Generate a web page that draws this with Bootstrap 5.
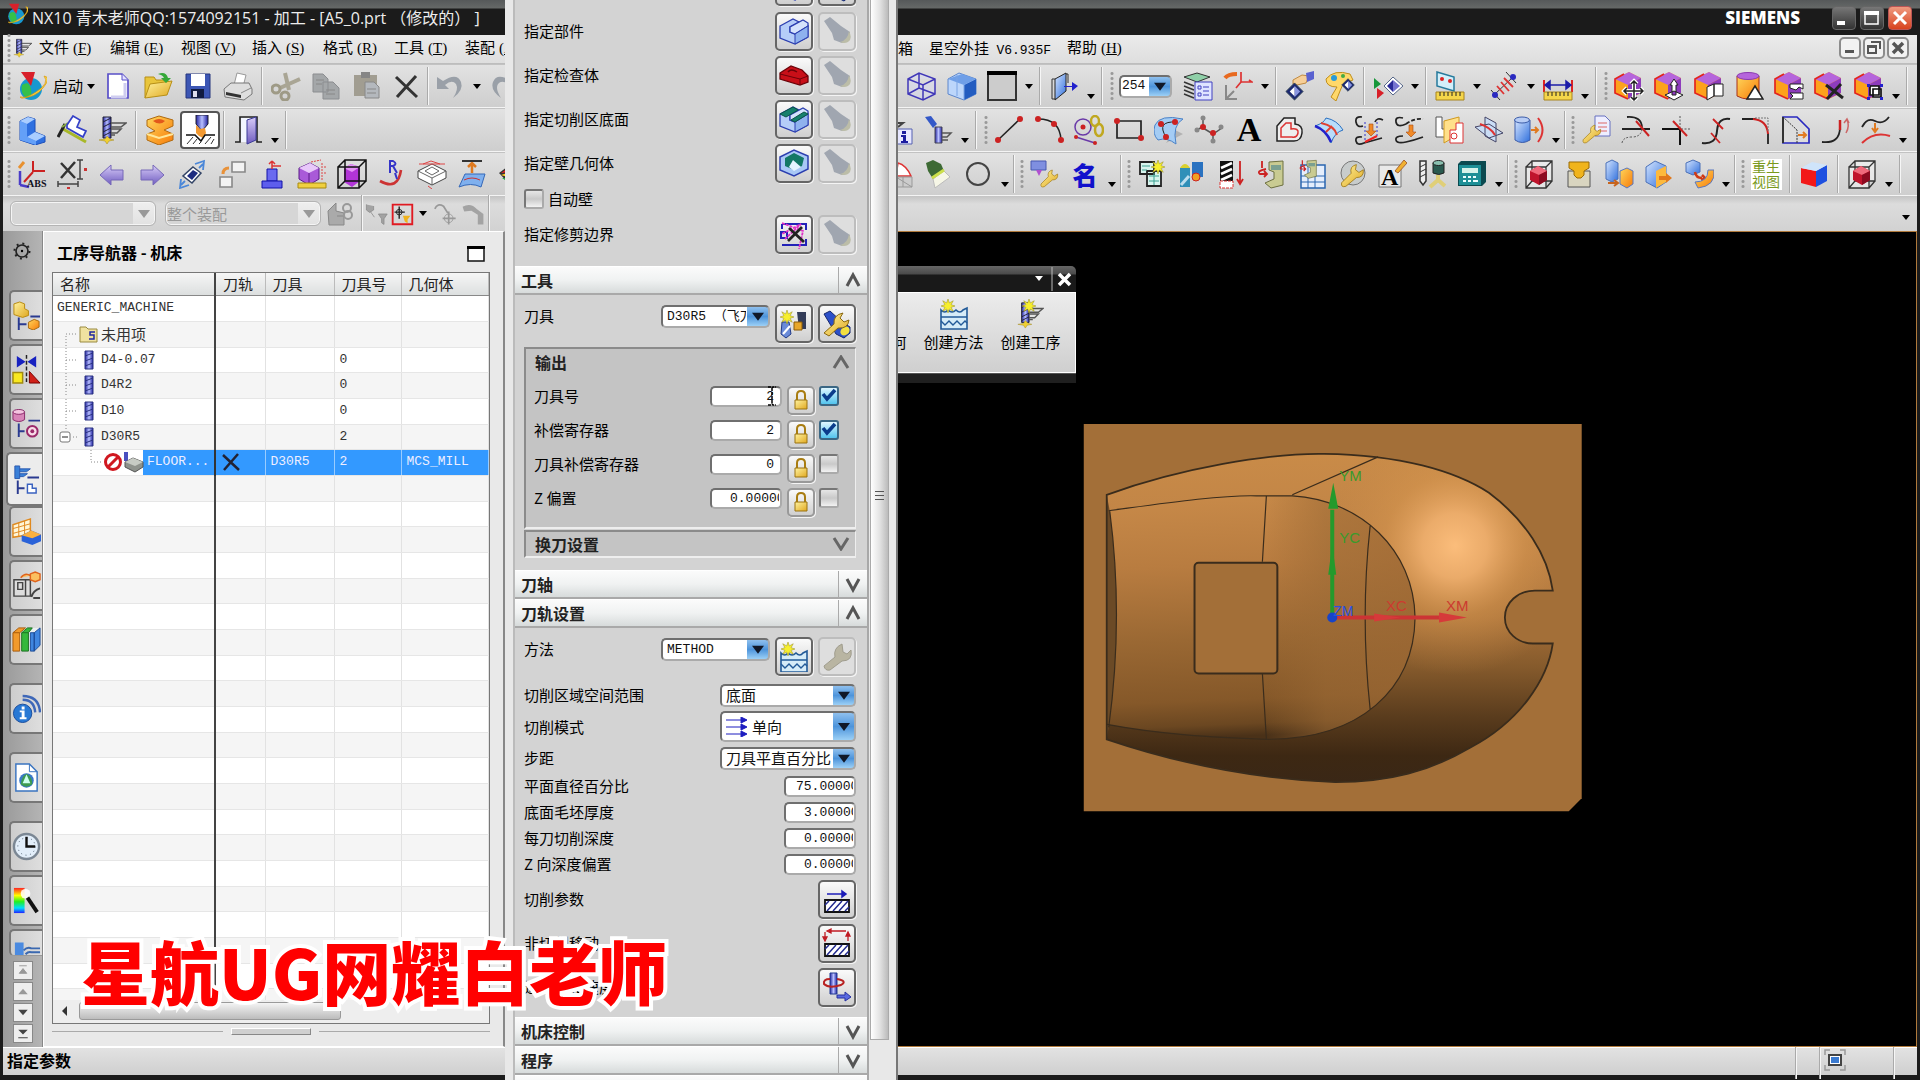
<!DOCTYPE html>
<html lang="zh-CN">
<head>
<meta charset="utf-8">
<meta name="viewport" content="width=device-width, initial-scale=1">
<title>NX10 - 加工</title>
<link href="https://cdn.jsdelivr.net/npm/bootstrap@5.3.0/dist/css/bootstrap.min.css" rel="stylesheet">
<style>
:root{--cjk:"Noto Sans CJK SC",sans-serif;--mono:"Liberation Mono","Noto Sans CJK SC",monospace}
body{background:#1b1b1b;font:15px/20px var(--cjk);color:#000;height:100vh;overflow:hidden;position:relative}
button{border:0;background:none;padding:0;color:inherit;font:inherit}
.app-frame{padding:0 3px 5px;height:100%}
/* title bar */
.title-strip{height:35px;background:linear-gradient(#56595a 0,#656867 8px,#1b1b1b 9px);margin:0 -3px;padding:0 8px 0 6px;color:#ededed;font:16px/20px "Open Sans",var(--cjk)}
.brand-word{font:800 17px/20px "Open Sans",sans-serif;color:#fff;margin-right:32px}
.win-btn{width:24px;height:24px;margin-left:4px;border-radius:4px;border:1px solid #666;background:linear-gradient(#777,#333);display:flex}
.win-btn.closer{background:linear-gradient(#ef9a80,#d8431f);border-color:#b55}
/* menu */
.menu-strip{height:29px;background:linear-gradient(#ebebeb,#dedede);border-bottom:1px solid #bdbdbd;padding-bottom:3px}
.menu-strip a{color:#000;text-decoration:none;width:71px;flex:none;white-space:nowrap}
.menu-strip .ltn{font:15px/20px "Liberation Serif",serif;margin-left:4px}
.mdi{width:22px;height:22px;margin-left:2px;border:2px solid #8c8c8c;border-radius:5px;background:#f2f2f2;display:flex}
/* tool rows */
.tool-strip{height:44px;background:linear-gradient(#e2e2e2,#cecece);border-bottom:1px solid #f4f4f4;border-top:1px solid #c2c2c2}
.left-part{width:502px;flex:none;overflow:hidden}
.right-part{margin-left:393px;flex:1;min-width:0;overflow:hidden}
.ic{width:40px;height:38px;flex:none;display:flex;align-items:center;justify-content:center}
.ic svg{width:30px;height:30px;display:block}
.ic.on{border:2px solid #555;border-radius:4px;background:#fff}
.crt{width:14px;height:38px;flex:none;display:flex;align-items:center;justify-content:center}
.crt::after{content:"";border:4px solid transparent;border-top:5px solid #000;border-bottom:0}
.crt.low{padding-top:20px}
.sp{width:8px;height:38px;flex:none;background:linear-gradient(90deg,#aaa 1px,#f6f6f6 1px 2px,transparent 2px) 3px 0 no-repeat}
.sp.thin{width:4px;background-position:1px 0}
.grip{width:9px;height:30px;flex:none;background:radial-gradient(circle,#999 1px,transparent 2px) 3px 0/6px 5px repeat-y}
.pick-strip{height:35px;background:linear-gradient(#c4c4c4,#dcdcdc 8px,#d2d2d2)}
/* inputs */
.nx-select,.nx-input{border:2px solid #6f6f6f;border-right-color:#aaa;border-bottom-color:#aaa;border-radius:5px;background-color:#fff;color:#111;font:13px/18px var(--mono);padding:0 22px 0 4px;height:23px;outline:0;min-width:0}
.nx-select{appearance:none;-webkit-appearance:none;background-image:url("data:image/svg+xml,%3Csvg xmlns='http://www.w3.org/2000/svg' viewBox='0 0 20 20'%3E%3Cpath d='M4 6h12l-6 8z' fill='%23101828'/%3E%3C/svg%3E"),linear-gradient(#8fc0ee,#4d94db 50%,#9cd0f6);background-size:20px 20px,21px 100%;background-position:right center;background-repeat:no-repeat}
.nx-select.han{font:15px/18px var(--cjk);width:136px}
.nx-select.tall{height:31px;padding-left:30px}
.nx-select.off{background-color:#d6d6d6;color:#999;border:1px solid #f5f5f5;outline:1px solid #b4b4b4;font:15px/18px var(--cjk);background-image:url("data:image/svg+xml,%3Csvg xmlns='http://www.w3.org/2000/svg' viewBox='0 0 20 20'%3E%3Cpath d='M4 6h12l-6 8z' fill='%23999'/%3E%3C/svg%3E"),linear-gradient(#eee,#e2e2e2);opacity:1}
.nx-input{height:21px;width:72px;padding:0 1px 0 18px}
.nx-input.wide-num{padding-left:10px}
.nx-input.num-right{text-align:right;padding:0 6px}
.tick{appearance:none;-webkit-appearance:none;width:20px;height:20px;margin:0;border:2px solid #777;border-right-color:#aaa;border-bottom-color:#aaa;border-radius:3px;background:linear-gradient(#e6e6e6,#c9c9c9 50%,#f2f2f2);flex:none}
.tick:checked{border-color:#3b6784;background:url("data:image/svg+xml,%3Csvg xmlns='http://www.w3.org/2000/svg' viewBox='0 0 16 16'%3E%3Cpath d='M2 6l4 5 8-9' fill='none' stroke='%230b3d8c' stroke-width='3.6'/%3E%3C/svg%3E"),linear-gradient(#dff6ff,#52c4ee)}
/* resource bar and navigator */
.res-bar{width:40px;flex:none;background:linear-gradient(90deg,#9a9a9a,#b4b4b4);border-right:1px solid #888;padding-left:6px}
.res-gear{height:59px;padding:8px 0 0 4px}
.res-tab{height:51px;width:33px;margin-bottom:3px;border:2px solid #777;border-right:0;border-radius:5px 0 0 5px;background:linear-gradient(90deg,#cdcdcd,#dedede);display:flex;align-items:center;justify-content:center;flex:none}
.res-tab svg{width:29px;height:29px}
.res-tab.live{background:#ececec;width:36px;margin-left:-3px;height:54px;margin-bottom:0}
.res-tab.gap-top{margin-top:15px}
.res-tab.cut-off{height:27px;align-items:flex-start;overflow:hidden;border-bottom:1px solid #999;margin-bottom:5px}
.pgr{width:20px;height:19px;margin:0 0 2px 4px;border:1px solid #888;background:#eee;display:flex}
.nav-pane{width:462px;flex:none;background:#e9e9e9;border:1px solid #fff;border-right:2px solid #888;padding:0 13px 0 8px}
.nav-title{height:40px;font:bold 16px/20px var(--cjk);padding:0 5px}
.grid-box{border:1px solid #777;background:#fff;height:752px;overflow:hidden;position:relative}
.op-grid{width:100%;table-layout:fixed;border-collapse:collapse;font:13px/18px var(--mono);color:#333}
.op-grid th{height:22px;font:15px/20px var(--cjk);color:#222;padding:0 7px;background:linear-gradient(#f6f6f6,#dcdfdf);border-right:1px solid #bbb;border-bottom:1px solid #888}
.op-grid td{height:26px;padding:0 5px;border-right:1px solid #e2e2e2;border-bottom:1px solid #e6e6e6;white-space:nowrap;overflow:hidden}
.op-grid tbody tr:nth-child(3n) td{height:25px}
.op-grid tbody tr:nth-child(even) td{background:#f5f5f5}
.op-grid td:first-child,.op-grid th:first-child{border-right:2px solid #444}
.op-grid td:first-child{padding:0 0 0 4px}
.op-grid .hot td{background:#3399ff;color:#eef;border-right-color:#9cf}
.op-grid .hot td:first-child{background:linear-gradient(90deg,#fff 90px,#3399ff 90px);border-right-color:#333}
.tree-row{display:flex;align-items:center;height:24px}
.tree-row svg{flex:none}
.han-txt{font:15px/20px var(--cjk)}
.hscroll{position:absolute;left:0;right:0;bottom:0;height:23px;background:#eee;padding:2px 0 3px 26px}
.hthumb{width:262px;height:18px;border:1px solid #999;border-radius:3px;background:linear-gradient(#f4f4f4,#bcbcbc)}
.split-line{height:1px;background:#aaa}
.split-thumb{width:80px;height:7px;background:#d0d0d0;border:1px solid #fff;border-right-color:#888;border-bottom-color:#888}
/* canvas */
.scene{background:#000;border:1px solid #b07a3c;position:relative;min-width:0;overflow:hidden}
.scene>svg{position:absolute;inset:0;width:100%;height:100%}
.floater{position:absolute;left:178px;top:34px;width:392px}
.floater .ft{height:26px;background:linear-gradient(#666,#4a4a4a 8px,#191919 9px);border-radius:0 5px 0 0}
.floater .fb{height:81px;background:linear-gradient(#ececec,#cfcfcf);border:1px solid #fff;padding-right:6px}
.floater .ff{height:10px;background:#1f1f1f;border-top:1px solid #555}
.fbtn{width:77px;text-align:center;padding-top:5px;align-self:flex-start}
.fbtn svg{width:30px;height:32px;display:block;margin:0 auto 2px}
.status-strip{height:28px;background:linear-gradient(#e2e2e2,#cfcfcf);font:bold 16px/20px var(--cjk);border-top:1px solid #fff;padding:0 0 3px 4px}
/* operation dialog */
.op-dialog{position:absolute;left:505px;top:0;width:393px;height:100%;background:#e8e8e8;border-right:2px solid #777;overflow:hidden;display:flex;padding-left:8px;z-index:3}
.op-body{width:356px;flex:none;background:#d3d3d3;border-left:2px solid #bbb;border-right:2px solid #a8a8a8}
.op-rows{padding:0 11px 0 9px}
.peek{height:9px;overflow:hidden;display:flex;align-items:flex-end;justify-content:flex-end;padding-bottom:3px}
.prow{height:44px;display:flex;align-items:center}
.prow>label,.prow>span:first-child{margin-right:auto;white-space:nowrap}
.prow.head-row{height:43px;align-items:flex-start}
.prow.head-row label{padding-top:2px}
.prow.head-row .nx-select{margin-top:1px}
.sq{width:38px;height:39px;border:2px solid #666;border-radius:5px;background:linear-gradient(#fafafa,#cfcfcf);margin-left:5px;display:flex;align-items:center;justify-content:center;flex:none;box-shadow:1px 1px 0 #f4f4f4}
.sq svg{width:30px;height:30px}
.sq:disabled{border-color:#bdbdbd;background:#dedede}
.sq.mini{width:28px;height:29px;margin-right:4px;border-color:#999;margin-top:8px}
.sq.mini svg{width:22px;height:22px}
.sect{height:29px;width:100%;display:flex;align-items:center;background:linear-gradient(#fbfbfb 0,#f0f2f2 50%,#d7dbdb);border-top:1px solid #fff;border-bottom:2px solid #a9a9a9;font:bold 16px/20px var(--cjk);padding-left:6px;color:#222}
.sect .chev{margin-left:auto;width:29px;height:26px;border-left:1px solid #aaa;padding:4px 6px}
.subgrp{border:2px solid #8b8b8b;border-right:1px solid #eee;border-bottom-color:#eee;background:#c4c4c4;margin:0}
.subhead{height:26px;width:100%;display:flex;align-items:center;justify-content:space-between;font:bold 16px/20px var(--cjk);padding:0 5px 0 9px;color:#222}
.row34{height:34px}
.row30{height:30px}.row33{height:33px}.row26{height:26px}.row27{height:27px}
.vrail{width:19px;height:1040px;margin-left:1px;border:1px solid #aaa;border-top:0;background:linear-gradient(90deg,#fff,#e4e4e4 50%,#bbb);position:relative}
.vrail i{position:absolute;left:4px;top:491px;width:9px;height:11px;background:repeating-linear-gradient(#555 0 1px,transparent 1px 4px)}
.beam{position:absolute;right:5px;top:0;width:10px;height:20px}
.banner-txt{position:absolute;left:81px;top:920px;z-index:5;font:900 69px/100px "Noto Sans CJK SC",sans-serif;color:#f00;white-space:nowrap;-webkit-text-stroke:8px #fff;paint-order:stroke fill;text-shadow:0 0 3px #fff}
</style>
<script src="https://cdn.jsdelivr.net/npm/bootstrap@5.3.0/dist/js/bootstrap.bundle.min.js"></script>
</head>
<body>
<svg width="0" height="0" class="position-absolute" aria-hidden="true">
<defs>
<linearGradient id="gb" x1="0" x2="1" y2="1"><stop stop-color="#d5e5ff"/><stop offset="1" stop-color="#2f6fdc"/></linearGradient>
<linearGradient id="gy" x1="0" x2="1" y2="1"><stop stop-color="#fff3a0"/><stop offset="1" stop-color="#e0a820"/></linearGradient>
<linearGradient id="gp" x1="0" x2="0" y2="1"><stop stop-color="#d8ccf8"/><stop offset="1" stop-color="#6f5cc0"/></linearGradient>
<linearGradient id="go" x1="0" x2="1" y2="1"><stop stop-color="#ffd75c"/><stop offset="1" stop-color="#f77a08"/></linearGradient>
<linearGradient id="gm" x1="0" x2="1"><stop stop-color="#2424a0"/><stop offset=".5" stop-color="#b8c0ff"/><stop offset="1" stop-color="#2020a0"/></linearGradient>
<linearGradient id="rb" x1="0" x2="0" y2="1"><stop stop-color="#f22"/><stop offset=".3" stop-color="#ff0"/><stop offset=".55" stop-color="#2e2"/><stop offset=".8" stop-color="#0df"/><stop offset="1" stop-color="#22f"/></linearGradient>
<symbol id="nx" viewBox="0 0 30 30"><circle cx="14" cy="18" r="11" fill="#1798d0"/><path d="M5 14q7-5 9 4t-5 9q-6-6-4-13" fill="#35c04a"/><path d="M27 5q6 7-8 16T3 26q14 2 23-9t1-12" fill="#f8d040" stroke="#d89a10" stroke-width=".7"/><path d="M4 1l14-0-4 14z" fill="#d8202a"/></symbol>
<symbol id="star" viewBox="0 0 16 16"><path d="M8 0l1.500 4.500L14 2l-2.500 4.500L16 8l-4.500 1.500L14 14l-4.500-2.500L8 16l-1.500-4.500L2 14l2.500-4.500L0 8l4.500-1.500L2 2l4.500 2.500z" fill="#f7ef2e" stroke="#9a9020" stroke-width=".6"/></symbol>
<symbol id="mill" viewBox="0 0 30 30"><path d="M6 2h8v21H6z" fill="url(#gm)" stroke="#223"/><path d="M6 7l8-4M6 12l8-4M6 17l8-4M6 21l8-4" stroke="#223"/><path d="M14 8h15l-5 4H14M14 14h10l-4 4h-6M14 20h4" fill="none" stroke="#555" stroke-width="1.500"/><path d="M2 25l6-1 2-3 3 3 4 1-5 1-2 3-2-3z" fill="#f0cf30" stroke="#a08820" stroke-width=".5"/></symbol>
<symbol id="new" viewBox="0 0 30 30"><path d="M5 3h14l6 6v18H5z" fill="#fff" stroke="#5a50c8" stroke-width="1.700"/><path d="M8 26h14V12" stroke="#cfcdf0" stroke-width="3" fill="none"/><path d="M19 3v6h6" fill="#e4e2ff" stroke="#5a50c8"/></symbol>
<symbol id="open" viewBox="0 0 30 30"><path d="M2 27V6h9l2 3h10v5" fill="#e9c53b" stroke="#b78f16"/><path d="M2 27l5-14 22-3-5 14z" fill="url(#gy)" stroke="#b78f16"/><path d="M15 3q8-3 10 4h3l-5 5-5-5h3q-1-3-6-4" fill="#35a838"/></symbol>
<symbol id="save" viewBox="0 0 30 30"><path d="M3 3h24v24H3z" fill="#3c56b4" stroke="#24357c"/><path d="M8 3h14v12H8z" fill="#fff"/><path d="M8 18h13v9H8z" fill="#111b40"/><path d="M10 20h4v6h-4z" fill="#dde"/></symbol>
<symbol id="print" viewBox="0 0 30 30"><path d="M11 14l3-12 9 2-3 12z" fill="#fff" stroke="#999"/><path d="M1 18l7-6h18l3 6v5l-8 6-19-3z" fill="#dedede" stroke="#777"/><path d="M3 21l15 3v3L3 24z" fill="#333"/><path d="M18 22l10-5" stroke="#888"/></symbol>
<symbol id="cut" viewBox="0 0 30 30"><path d="M14 2l4 17M29 8L9 17" stroke="#a9a594" stroke-width="4"/><circle cx="5" cy="18" r="4" fill="none" stroke="#9e9a86" stroke-width="3"/><circle cx="14" cy="25" r="4" fill="none" stroke="#9e9a86" stroke-width="3"/></symbol>
<symbol id="copy" viewBox="0 0 30 30"><path d="M2 3h10l5 5v13H2zM12 11h10l6 6v11H12z" fill="#a4a7a9" stroke="#8b8d90"/><path d="M5 9h8M5 13h6M15 19h9M15 23h9" stroke="#888"/></symbol>
<symbol id="paste" viewBox="0 0 30 30"><path d="M3 4h23v21H3z" fill="#a19d91"/><path d="M10 1h9v6h-9z" fill="#858585"/><path d="M14 11h9l5 5v11H14z" fill="#b4b8bd" stroke="#888"/><path d="M16 18h9M16 22h9" stroke="#888"/></symbol>
<symbol id="xx" viewBox="0 0 30 30"><path d="M5 6l21 20M25 5L6 26" stroke="#333" stroke-width="3"/></symbol>
<symbol id="undo" viewBox="0 0 30 30"><path d="M2 6v12h12l-4-4q7-6 11-1 3 5-3 14 11-8 8-16-4-10-18-1z" fill="#9aa0a8"/></symbol>
<symbol id="lpart" viewBox="0 0 30 30"><path d="M3 6l8-4 7 2v13l10 4v6l-10 3L3 25z" fill="#2f70e0" stroke="#1d4fb8"/><path d="M3 6l7 3v13l9 4v4L3 25z" fill="#64a0f8"/><path d="M3 6l8-4 7 2-8 5zM10 22l8-5 10 4-9 5z" fill="#a9cdff"/></symbol>
<symbol id="sket" viewBox="0 0 30 30"><path d="M6 14l23 13" stroke="#a8b828" stroke-width="3" fill="none"/><path d="M1 22l7-13" stroke="#222" stroke-width="3"/><path d="M5 12l6-4" stroke="#8a4" stroke-width="2"/><path d="M10 10l6-9 7 4-3 7 9 4-3 6-16-9z" fill="#fff" stroke="#3440c8" stroke-width="1.700"/></symbol>
<symbol id="mold" viewBox="0 0 30 30"><path d="M2 5l12-4 14 4v6l-9 4 9 4v6l-14 5-12-5v-6l8-3-8-5z" fill="url(#go)" stroke="#b06a10"/><path d="M8 6q6-4 12 0-5 5-12 0" fill="#e2581b"/><path d="M2 19l12 4 14-4" stroke="#ffe79a" stroke-width="2" fill="none"/></symbol>
<symbol id="cutter" viewBox="0 0 30 30"><path d="M11 0h12v9l-6 7-6-7z" fill="url(#gm)" stroke="#223"/><path d="M11 10l4 4 5-1 1 5-3 5-4-2-3-3z" fill="#f39a32"/><path d="M1 20h9l6 6 4-6h10" stroke="#111" stroke-width="1.500" fill="none"/><path d="M2 29l6-7M8 29l4-5M14 29l2-2M20 29l6-7M26 29l3-5" stroke="#333"/></symbol>
<symbol id="door" viewBox="0 0 30 30"><path d="M2 27h5V2h17v25h5" fill="none" stroke="#222" stroke-width="1.600"/><path d="M8 3h10v24H8z" fill="#f2f6ff"/><path d="M14 5l9-3v23l-9 4z" fill="url(#gp)" stroke="#3a3a98"/></symbol>
<symbol id="abs" viewBox="0 0 30 30"><path d="M16 13V2M16 12h12M16 13l-9 10" stroke="#c22" stroke-width="2"/><path d="M3 12v14M3 26l9 2" stroke="#4a3cc8" stroke-width="2.500"/><path d="M2 9l5-6" stroke="#e89130" stroke-width="3"/><text x="10" y="28" font-family="Liberation Serif" font-weight="700" font-size="10" fill="#112">ABS</text></symbol>
<symbol id="xdim" viewBox="0 0 30 30"><path d="M4 4l14 15M18 3L4 19" stroke="#333" stroke-width="2.500"/><path d="M23 1v19M20 1h6M20 20h6M1 25h20M1 22v6M21 22v6" stroke="#444" stroke-width="1.500"/><path d="M27 9h3v3h-3zM10 28h3v2h-3z" fill="#c33"/></symbol>
<symbol id="larr" viewBox="0 0 30 30"><path d="M3 16L14 6v5h12v10H14v5z" fill="url(#gp)" stroke="#7769b8"/></symbol>
<symbol id="rarr" viewBox="0 0 30 30"><path d="M27 16L16 6v5H4v10h12v5z" fill="url(#gp)" stroke="#7769b8"/></symbol>
<symbol id="swap" viewBox="0 0 30 30"><path d="M16 8l8 6-9 10-9-7z" fill="#fff" stroke="#346" stroke-width="1.500"/><path d="M16 11l5 3-6 7-5-4z" fill="#1d2c80"/><path d="M18 5l9-3-1 9M12 26l-9 3 1-9M22 9l4-4M8 22l-4 4" stroke="#4b87d8" stroke-width="1.800" fill="none"/></symbol>
<symbol id="two" viewBox="0 0 30 30"><path d="M15 3h13v10H15zM3 18h12v10H3z" fill="#f3f3f3" stroke="#888" stroke-width="1.600"/><path d="M6 15q0-6 6-6" stroke="#e8923a" stroke-width="3" fill="none"/></symbol>
<symbol id="ped" viewBox="0 0 30 30"><path d="M10 10h10v12H10z" fill="#6a6af0" stroke="#1313a8"/><path d="M5 22h20v7H5z" fill="#5d5ded" stroke="#1313a8"/><path d="M15 10V2M15 2l-3 3M15 2l3 3M15 7h9" stroke="#d33" fill="none" stroke-width="1.500"/></symbol>
<symbol id="boxr" viewBox="0 0 30 30"><path d="M2 9l11-5 9 5v11l-10 6-10-6z" fill="#a95ad8" stroke="#5b1b88"/><path d="M2 9l11-5 9 5-10 5z" fill="#e8c8fa"/><path d="M12 14v12" stroke="#5b1b88"/><path d="M1 24h28v5H1z" fill="#f0d040" stroke="#a88a10"/><path d="M14 3l10-2M25 4v18M27 8h3M27 14h3" stroke="#d44" stroke-dasharray="2 1"/></symbol>
<symbol id="bbox" viewBox="0 0 30 30"><path d="M7 9l7-4 9 3v14l-8 6-8-5z" fill="#b234d8"/><path d="M7 9l7-4 9 3-8 5z" fill="#e493f6"/><path d="M1 8h21v21H1zM8 1h21v21H8zM1 8l7-7M22 8l7-7M22 29l7-7M1 29l7-7" fill="none" stroke="#111" stroke-width="1.500"/></symbol>
<symbol id="rad" viewBox="0 0 30 30"><path d="M3 22q18 10 21-11" stroke="#c33" stroke-width="2.600" fill="none"/><path d="M13 1v13M13 2h3q5 3 0 5h-3M16 7l4 7M18 14l2 6" stroke="#3535c8" stroke-width="2" fill="none"/></symbol>
<symbol id="wirebox" viewBox="0 0 30 30"><path d="M1 12l14-7 14 7v7l-14 7-14-7z" fill="#fff" stroke="#444"/><path d="M1 12l14 7 14-7M15 19v7M8 12l7-4 7 4-7 4z" fill="none" stroke="#666"/><path d="M2 5h26M6 5l8-3 9 3M11 27l4 3" stroke="#d44" fill="none"/></symbol>
<symbol id="surfx" viewBox="0 0 30 30"><path d="M2 28l6-13h20l-4 13q-10-5-22 0" fill="#7fb0ee" stroke="#3568b8"/><path d="M15 14V5M11 8l4-4 4 4" stroke="#e07a1f" stroke-width="2.500" fill="none"/><path d="M5 2h20" stroke="#333" stroke-width="2"/><path d="M7 21q8-4 16 0" stroke="#c33" fill="none"/></symbol>
<symbol id="rainb" viewBox="0 0 30 30"><path d="M2 14L14 5v22z" fill="#333"/><path d="M4 14l10-7v6z" fill="#e22"/><path d="M4 16l10-3v6z" fill="#fc2"/><path d="M5 19h9v6z" fill="#2a4"/></symbol>
<symbol id="gfunn" viewBox="0 0 30 30"><path d="M3 3v7l4 3 5-3V5M8 12l5 7M18 15h11l-4 6v7l-3-2v-5z" fill="#a3a3a3" stroke="#8c8c8c"/></symbol>
<symbol id="gpath" viewBox="0 0 30 30"><path d="M5 9q3-7 10-3l5 8" stroke="#999" stroke-width="2" fill="none"/><path d="M21 12v15M14 20h15" stroke="#999" stroke-width="2"/><circle cx="21" cy="20" r="5" fill="none" stroke="#999"/></symbol>
<symbol id="glink" viewBox="0 0 30 30"><path d="M3 12l8-8v8l8 2v12H4zM12 17h8" fill="#aaa" stroke="#888"/><circle cx="22" cy="9" r="4" fill="none" stroke="#999" stroke-width="2"/><circle cx="23" cy="16" r="4" fill="none" stroke="#999" stroke-width="2"/></symbol>
<symbol id="gham" viewBox="0 0 30 30"><path d="M2 6q10-6 18 3l8 6v13h-7V16l-8-5-9 1z" fill="#a3a3a3"/></symbol>
<symbol id="snapbox" viewBox="0 0 30 30"><path d="M5 5h21v21H5z" fill="none" stroke="#e01a22" stroke-width="2"/><path d="M12 7v13M7 13h11" stroke="#222" stroke-width="1.500"/><circle cx="12" cy="13" r="3" fill="none" stroke="#222"/><path d="M16 17h8l-3 4v4l-3-2z" fill="#f0b21c"/></symbol>
<symbol id="cubew" viewBox="0 0 30 30"><path d="M1 8l11-6 16 6v15l-12 6-15-6zM1 8l15 6 12-6M16 14v15M12 2v15L1 23M12 17l16 6" fill="#d9ddf8" fill-opacity=".4" stroke="#4037b8" stroke-width="1.500"/></symbol>
<symbol id="cubes" viewBox="0 0 30 30"><path d="M1 8l11-6 17 6v15l-12 6-16-6z" fill="#bcd6fb" stroke="#5c86cc"/><path d="M17 14l12-6v15l-12 6z" fill="#235cc0"/><path d="M1 8l16 6 12-6-14-5z" fill="#6f9fe8"/><path d="M17 14v15M10 4v21" fill="none" stroke="#7ba4e4"/></symbol>
<symbol id="winb" viewBox="0 0 30 30"><path d="M1 1h28v28H1z" fill="#ccc" stroke="#333" stroke-width="2"/><path d="M0 0h30v4H0z" fill="#000"/></symbol>
<symbol id="door2" viewBox="0 0 30 30"><path d="M6 8l11-6v18l-11 9z" fill="url(#gb)" stroke="#222"/><path d="M6 8H3v20h4M17 3h2v9" stroke="#333" fill="none"/><path d="M15 15h8v-4l6 4-6 5v-4h-8z" fill="#22c"/></symbol>
<symbol id="layers" viewBox="0 0 30 30"><path d="M1 6l13-4 13 4-13 5z" fill="#8fd0a8" stroke="#333"/><path d="M1 11l10 4M1 15l10 4M1 19l10 4M1 23l10 4" stroke="#333" stroke-width="1.500"/><path d="M12 11h17v18H12z" fill="#dfe4ff" stroke="#4040c0"/><path d="M15 15h3v3h-3zM15 22h3v3h-3zM20 16h6M20 20h6M20 24h6" stroke="#4040c0" fill="none"/></symbol>
<symbol id="csys" viewBox="0 0 30 30"><path d="M18 11V1M18 11h11l-3-2M18 11l-5 6" stroke="#d33" stroke-width="1.700" fill="none"/><path d="M3 14v14h11M3 28l8-8" stroke="#888" stroke-width="2" fill="none"/><path d="M2 7q3-4 12-4" stroke="#e86a20" stroke-width="4" fill="none"/></symbol>
<symbol id="dia" viewBox="0 0 20 20"><path d="M10 1l9 9-9 9-9-9z" fill="#1b2870" stroke="#345"/><path d="M10 4l6 6-6 6z" fill="#8a96e0"/><path d="M10 5v10L5 10z" fill="#fff"/></symbol>
<symbol id="hand" viewBox="0 0 30 30"><path d="M8 9l9-5 7 1-3 7-9 2-4-1z" fill="#f6cf98" stroke="#c08a40"/><path d="M21 2l8-2v8l-7 3z" fill="#5a62d0"/><use href="#dia" x="0" y="11" width="19" height="19"/></symbol>
<symbol id="pal" viewBox="0 0 30 30"><path d="M1 8q8-10 24-5l3 6-10 4-3 7-4 10-5-4 6-10q-11 0-11-8" fill="#ffd86a" stroke="#c08e1c"/><circle cx="9" cy="7" r="3" fill="#2a9ad8"/><circle cx="18" cy="5" r="2" fill="#4a4"/><use href="#dia" x="16" y="7" width="14" height="14"/></symbol>
<symbol id="play" viewBox="0 0 30 30"><path d="M1 7l7 6-7 5z" fill="#18963a"/><path d="M4 17l7 5-7 6z" fill="#d81f28"/><path d="M20 6l10 9-10 9-9-9z" fill="#fff" stroke="#568"/><path d="M20 9l7 6-7 6z" fill="#7674d0"/><path d="M20 9v12l-6-6z" fill="#2a2a98"/></symbol>
<symbol id="rul" viewBox="0 0 30 30"><path d="M1 21h28v8H1z" fill="#f5d64a" stroke="#a8841c"/><path d="M5 21v4M9 21v4M13 21v4M17 21v4M21 21v4M25 21v4" stroke="#222"/></symbol>
<symbol id="meas" viewBox="0 0 30 30"><path d="M2 1l17 5v14L2 15z" fill="#d3effa" stroke="#267a9c" stroke-width="1.500"/><circle cx="7" cy="8" r="2" fill="#d22"/><circle cx="15" cy="10" r="2" fill="#d22"/><use href="#rul"/></symbol>
<symbol id="spring" viewBox="0 0 30 30"><path d="M5 24L24 6" stroke="#333"/><path d="M8 15l7 8M12 11l8 9M15 7l9 9" stroke="#d33" stroke-width="1.800"/><path d="M17 1l10 11M2 19l9 10" stroke="#333"/><circle cx="24" cy="6" r="3" fill="#2a2ac0"/><circle cx="6" cy="24" r="3" fill="#2a2ac0"/></symbol>
<symbol id="dist" viewBox="0 0 30 30"><path d="M1 9v12M29 9v12" stroke="#d22" stroke-width="2"/><path d="M2 14h26M2 14l5-4v8zM28 14l-5-4v8z" stroke="#1c1ca8" fill="#1c1ca8" stroke-width="1.500"/><use href="#rul"/></symbol>
<symbol id="pc" viewBox="0 0 30 30"><path d="M1 8l14-7 12 6v15l-12 6-14-6z" fill="#fda21c"/><path d="M1 8l14-7 12 6-13 7z" fill="#b565dc"/><path d="M14 14l13-7v15l-13 6z" fill="#8e3cbc"/><path d="M14 28L1 22V8l9-5" fill="none" stroke="#e2251f" stroke-width="1.700"/></symbol>
<symbol id="pc1" viewBox="0 0 30 30"><use href="#pc"/><path d="M20 10v19M10 20h19M17 13l3-3 3 3M17 26l3 3 3-3M13 17l-3 3 3 3M26 17l3 3-3 3" stroke="#fff" stroke-width="4" fill="none"/><path d="M20 10v19M10 20h19M17 13l3-3 3 3M17 26l3 3 3-3M13 17l-3 3 3 3M26 17l3 3-3 3" stroke="#222" stroke-width="1.500" fill="none"/></symbol>
<symbol id="pc2" viewBox="0 0 30 30"><use href="#pc"/><path d="M11 24l9-4 9 4-9 5zM20 8l-4 6h2v10h4V14h2z" fill="#fff" stroke="#222"/></symbol>
<symbol id="pc3" viewBox="0 0 30 30"><use href="#pc"/><path d="M13 16l7-3v12l-7 4zM20 13h9v12h-9z" fill="#fff" stroke="#222"/></symbol>
<symbol id="pc4" viewBox="0 0 30 30"><path d="M3 5v20q11 6 22 0V5" fill="url(#go)" stroke="#a83018"/><ellipse cx="14" cy="5" rx="11" ry="3.500" fill="#b565dc" stroke="#8a3ab0"/><path d="M13 28l8-13 8 13z" fill="#fff" stroke="#222" stroke-width="1.500"/></symbol>
<symbol id="pc5" viewBox="0 0 30 30"><use href="#pc"/><path d="M16 13h13v5l-4-2-3 3-6-2zM16 22h13v6H16l3-3z" fill="#fff" stroke="#222"/></symbol>
<symbol id="pc6" viewBox="0 0 30 30"><use href="#pc"/><path d="M12 14l17 13M27 13L13 28" stroke="#222" stroke-width="3"/></symbol>
<symbol id="pc7" viewBox="0 0 30 30"><use href="#pc"/><path d="M16 15h9v9h-9zM19 18h8v8h-8z" fill="#fff" stroke="#111" stroke-width="1.700"/><path d="M13 13h3v3h-3zM26 13h3v3h-3zM13 26h3v3h-3zM26 26h3v3h-3z" fill="#22c"/></symbol>
<symbol id="info" viewBox="0 0 30 30"><path d="M12 8h8l-5 4" stroke="#444" stroke-width="2" fill="none"/><path d="M13 14h16v15H13z" fill="#e6e6ff" stroke="#5560b0"/><path d="M19 16h4v3h-4zM18 20h5v6h2v2h-7v-2h2v-4h-2z" fill="#1a1aa0"/></symbol>
<symbol id="torch" viewBox="0 0 30 30"><path d="M2 2l6-1 6 8-4 4z" fill="#3358c8"/><path d="M12 12h7v16h-7z" fill="url(#gm)" stroke="#445"/><path d="M19 18h9l-4 4h-5M19 25h6" stroke="#555" fill="none" stroke-width="1.500"/></symbol>
<symbol id="line" viewBox="0 0 30 30"><path d="M4 25L26 4" stroke="#222" stroke-width="1.500"/><circle cx="4" cy="25" r="3" fill="#c22"/><circle cx="26" cy="4" r="3" fill="#c22"/></symbol>
<symbol id="arc" viewBox="0 0 30 30"><path d="M4 4q22 0 23 21" stroke="#222" stroke-width="1.500" fill="none"/><circle cx="4" cy="4" r="3" fill="#c22"/><circle cx="20" cy="9" r="3" fill="#c22"/><circle cx="27" cy="25" r="3" fill="#c22"/></symbol>
<symbol id="circ" viewBox="0 0 30 30"><circle cx="9" cy="12" r="8" fill="none" stroke="#6a39a8" stroke-width="1.500"/><circle cx="9" cy="12" r="2.500" fill="#c22"/><ellipse cx="21" cy="6" rx="4" ry="5" fill="none" stroke="#c0a820" stroke-width="2.500"/><ellipse cx="25" cy="15" rx="4" ry="6" fill="none" stroke="#c0a820" stroke-width="2.500"/><path d="M2 22l19 6" stroke="#6a39a8" stroke-width="1.500"/><circle cx="2" cy="22" r="2" fill="#c22"/><circle cx="21" cy="28" r="2" fill="#c22"/></symbol>
<symbol id="rect" viewBox="0 0 30 30"><path d="M3 6h24v17H3z" fill="none" stroke="#222" stroke-width="1.700"/><circle cx="3" cy="6" r="3" fill="#c22"/><circle cx="27" cy="23" r="3" fill="#c22"/></symbol>
<symbol id="studio" viewBox="0 0 30 30"><path d="M12 28l17-9-8-4z" fill="#999" opacity=".6"/><path d="M1 10q5-11 28-6-11 6-7 25-9-7-18-4-6-6-3-15" fill="#a4ccf4" stroke="#4a82c8"/><path d="M12 22q-10-16 10-15" stroke="#222" fill="none"/><circle cx="12" cy="22" r="3" fill="#c22"/><circle cx="7" cy="9" r="3" fill="#c22"/><circle cx="21" cy="7" r="3" fill="#c22"/></symbol>
<symbol id="spl" viewBox="0 0 30 30"><path d="M9 4v9l10 6 9-6M2 15l7-3M19 19v8" stroke="#555" stroke-width="1.500" fill="none"/><circle cx="9" cy="3" r="2.500" fill="#888"/><circle cx="3" cy="15" r="2.500" fill="#888"/><circle cx="27" cy="12" r="2.500" fill="#888"/><circle cx="19" cy="26" r="2.500" fill="#888"/><circle cx="9" cy="12" r="3" fill="#c22"/><circle cx="19" cy="18" r="3" fill="#c22"/></symbol>
<symbol id="offs" viewBox="0 0 30 30"><path d="M3 26V11l7-8h11v6q8 1 7 9-1 8-8 8z" fill="#eee" stroke="#222" stroke-width="1.500"/><path d="M7 22V13l5-5h5v6q8-1 7 4-1 5-6 4z" fill="none" stroke="#d33" stroke-width="1.500"/></symbol>
<symbol id="surfa" viewBox="0 0 30 30"><path d="M1 11Q10 8 12 3q11 2 17 12-8 2-12 13-5-13-16-17" fill="#b9ddfa" stroke="#2b70c0" stroke-width="1"/><path d="M1 11q11 4 16 16" stroke="#22c" stroke-width="2.500" fill="none"/><path d="M7 8q14 3 16 12M12 17l6-6" stroke="#e04030" stroke-width="1.800" fill="none"/></symbol>
<symbol id="curv" viewBox="0 0 30 30"><path d="M8 2Q1 1 2 7t7 4M29 5q-6-3-8 2M8 22q-7-1-6 4t8 2l18-5" stroke="#222" stroke-width="1.700" fill="none"/><path d="M11 7v19M23 7v14" stroke="#33c" stroke-dasharray="2 2"/><path d="M11 27l12-6" stroke="#e22" stroke-width="2"/><path d="M15 9h4v7h3l-5 5-5-5h3z" fill="#f08a28" stroke="#a84a10" stroke-width=".6"/></symbol>
<symbol id="curv2" viewBox="0 0 30 30"><path d="M9 3Q1 1 2 7t10 2" stroke="#222" stroke-width="1.700" fill="none"/><path d="M12 9q8-6 17-5" stroke="#222" stroke-width="1.800" stroke-dasharray="4 2" fill="none"/><path d="M9 21q-8 0-7 4t10 2 17-5" stroke="#222" stroke-width="1.700" fill="none"/><path d="M15 10h4v7h3l-5 5-5-5h3z" fill="#f08a28" stroke="#a84a10" stroke-width=".6"/></symbol>
<symbol id="proj" viewBox="0 0 30 30"><path d="M2 2h6v12h6v8H2z" fill="#fff" stroke="#555"/><path d="M10 6l15-4v17l-15 9z" fill="#ffe08a" stroke="#d09a20"/><path d="M16 15h6V8h7v20H16z" fill="#fff" stroke="#d33"/><circle cx="20" cy="21" r="3" fill="none" stroke="#d33"/></symbol>
<symbol id="inter" viewBox="0 0 30 30"><path d="M11 2l11 6v19l-11-6zM1 12l14-3 14 9-14 5z" fill="#c8defa" fill-opacity=".85" stroke="#446"/><path d="M6 9q10 3 15 11" stroke="#d33" stroke-width="2" fill="none"/></symbol>
<symbol id="cylarc" viewBox="0 0 30 30"><path d="M1 5v20q7 5 15 0V5" fill="url(#gb)" stroke="#3c5ca8"/><ellipse cx="8" cy="5" rx="7.500" ry="3" fill="#b8cdf5" stroke="#3c5ca8"/><path d="M17 15h7M21 12l3 3-3 3" stroke="#e07a20" stroke-width="2" fill="none"/><path d="M24 3q9 12 0 24" stroke="#d33" stroke-width="2" fill="none"/></symbol>
<symbol id="wrench" viewBox="0 0 30 30"><path d="M3 24l11-11q-2-8 6-10l-1 6 4 3 5-3q1 9-8 9L8 28q-6 2-5-4" fill="url(#gy)" stroke="#a07a18"/></symbol>
<symbol id="wdoc" viewBox="0 0 30 30"><path d="M14 1h10l5 5v15H14z" fill="#eef" stroke="#6670c0"/><path d="M17 8h9M17 12h9M17 16h9" stroke="#d66"/><use href="#wrench" x="0" y="8" width="21" height="21"/></symbol>
<symbol id="t1" viewBox="0 0 30 30"><path d="M6 2q15-1 15 11M1 14h28" stroke="#222" stroke-width="1.800" fill="none"/><path d="M21 14q-1 8-10 8t-10 6" stroke="#555" stroke-dasharray="2 1.500" fill="none"/><path d="M15 6l13 15" stroke="#c22" stroke-width="2"/></symbol>
<symbol id="t2" viewBox="0 0 30 30"><path d="M1 14h18v16" stroke="#111" stroke-width="2" fill="none"/><path d="M19 1v13h11" stroke="#555" stroke-dasharray="2 1.500" fill="none"/><path d="M12 6l14 15" stroke="#c22" stroke-width="2"/></symbol>
<symbol id="t3" viewBox="0 0 30 30"><path d="M1 28q14 2 15-12T29 4" stroke="#222" stroke-width="2" fill="none"/><path d="M12 4l10 10M10 18l9 10" stroke="#c22" stroke-width="1.800"/></symbol>
<symbol id="t4" viewBox="0 0 30 30"><path d="M1 4h14M27 18v11" stroke="#222" stroke-width="1.800"/><path d="M12 4q14 1 15 15" stroke="#c22" stroke-width="2" fill="none"/><path d="M14 3h13v13" stroke="#777" stroke-dasharray="2 1" fill="none"/></symbol>
<symbol id="t5" viewBox="0 0 30 30"><path d="M2 2h14l12 12v14H2z" fill="#ddd" stroke="#2828c0" stroke-width="1.700"/><path d="M2 28V2" stroke="#333" stroke-width="2"/><path d="M2 2l14 13v13" stroke="#333" stroke-dasharray="2 1" fill="none"/><path d="M17 20h8M22 17l3 3-3 3" stroke="#e07a20" stroke-width="2" fill="none"/></symbol>
<symbol id="t6" viewBox="0 0 30 30"><path d="M1 27q18 2 18-15" stroke="#222" stroke-width="1.800" fill="none"/><path d="M19 15V5" stroke="#c22" stroke-width="2.500"/><path d="M26 5q3 6-1 13M23 8l3-4 2 4" stroke="#c66" stroke-width="1.500" fill="none"/></symbol>
<symbol id="t7" viewBox="0 0 30 30"><path d="M1 12Q6 2 14 6t14-4" stroke="#222" stroke-width="1.800" fill="none"/><path d="M1 28q12-12 28-7" stroke="#d33" stroke-width="2" fill="none"/><path d="M14 8v8M11 13l3 4 3-4" stroke="#e07a20" stroke-width="2" fill="none"/></symbol>
<symbol id="fan" viewBox="0 0 30 30"><path d="M15 4q8 2 13 13H13z" fill="#fff" stroke="#d33" stroke-width="1.500"/><path d="M13 18h16v10H13zM13 18l16 10M20 18v10" fill="#ccc" stroke="#999"/></symbol>
<symbol id="lamp" viewBox="0 0 30 30"><path d="M3 4l7-3 8 4 3 7-11 8-5-8z" fill="#3d6a34"/><path d="M21 12l6 6-15 11-2-9z" fill="#f6f6e6" stroke="#bbb"/><path d="M9 19l12-8" stroke="#cde04a" stroke-width="3"/></symbol>
<symbol id="ring" viewBox="0 0 30 30"><circle cx="15" cy="15" r="11" fill="none" stroke="#444" stroke-width="2"/></symbol>
<symbol id="bw" viewBox="0 0 30 30"><path d="M1 2h15v9H1z" fill="#7f8fe0" stroke="#4858b0"/><path d="M6 11h6l-3 6z" fill="#b050d0"/><use href="#wrench" x="9" y="9" width="20" height="20"/></symbol>
<symbol id="gridn" viewBox="0 0 30 30"><path d="M3 3h14v12H3zM10 12h14v15H10z" fill="#d8f4ee" stroke="#222" stroke-width="1.800"/><path d="M12 17h10M12 22h10M17 14v12M5 7h8M5 11h5" stroke="#3aa090"/><use href="#star" x="14" y="1" width="14" height="14"/></symbol>
<symbol id="cyl2" viewBox="0 0 30 30"><path d="M3 9h10v19H3z" fill="#2f8fb8"/><path d="M3 9q5-8 10 0z" fill="#d8d030"/><path d="M4 26l8-9" stroke="#bde" stroke-width="3"/><path d="M15 3h11v15H15z" fill="#2a72c0"/><circle cx="19" cy="18" r="4" fill="#f2a020" stroke="#c22"/></symbol>
<symbol id="hat" viewBox="0 0 30 30"><path d="M3 2h13v20H3z" fill="#111"/><path d="M4 9l11-5M4 15l11-5M4 21l11-5" stroke="#fff" stroke-width="2.500"/><path d="M3 22h13v7H3z" fill="#fff" stroke="#d33" stroke-dasharray="3 1"/><path d="M23 2v22M20 20l3 5 3-5" stroke="#c22" stroke-width="1.800" fill="none"/></symbol>
<symbol id="mach" viewBox="0 0 30 30"><path d="M12 3l14-1v24l-12 3-6-5 9-4v-7l-5-2z" fill="#c9cb92" stroke="#6d7040"/><path d="M14 6h10v5H14z" fill="#7aa090"/><path d="M9 10q-10 2-6 5h7M7 12l3 3-3 3M5 2v7" stroke="#c22" stroke-width="1.800" fill="none"/></symbol>
<symbol id="mach2" viewBox="0 0 30 30"><path d="M4 6h24v23H4z" fill="#e5eefc" stroke="#2a66b0" stroke-width="1.500"/><path d="M4 17h24M4 23h24M11 6v23M18 6v23" stroke="#2a66b0"/><use href="#mach" x="1" y="0" width="22" height="20"/></symbol>
<symbol id="wball" viewBox="0 0 30 30"><circle cx="16" cy="14" r="12" fill="#c8cccc" stroke="#777"/><use href="#wrench" x="2" y="3" width="26" height="26"/></symbol>
<symbol id="aedit" viewBox="0 0 30 30"><path d="M2 6h22v22H2z" fill="#e9e9e9" stroke="#777"/><text x="4" y="26" font-family="Liberation Serif" font-weight="700" font-size="24">A</text><path d="M18 12L27 1l3 3-9 10z" fill="#f0b030" stroke="#a63"/></symbol>
<symbol id="tools2" viewBox="0 0 30 30"><path d="M3 2h6v20l-3 4-3-4z" fill="#eee" stroke="#333" stroke-width="1.500"/><path d="M3 8l6-3M3 13l6-3M3 18l6-3" stroke="#333"/><path d="M16 4v10q6 3 11 0V4" fill="#2a5a50" stroke="#222"/><ellipse cx="21.500" cy="4" rx="5.500" ry="2.500" fill="#8ac0b0" stroke="#222"/><path d="M21 16v5l-8 7M21 21l7 6" stroke="#e0cf78" stroke-width="4" fill="none"/></symbol>
<symbol id="calc" viewBox="0 0 30 30"><path d="M1 5l3-3h25v21l-4 4H1z" fill="#0b4a50"/><path d="M2 6h22v20H2z" fill="#1d8f96"/><path d="M5 9h16v5H5z" fill="#d5f2ea"/><path d="M6 18h3M11 18h3M16 18h3M6 22h3M11 22h3M16 22h5" stroke="#eff" stroke-width="2"/></symbol>
<symbol id="redc" viewBox="0 0 30 30"><path d="M2 8h20v21H2zM8 2h20v20H8zM2 8l6-6M22 8l6-6M22 29l6-7M2 29l6-7" fill="#fff" fill-opacity=".4" stroke="#333" stroke-width="1.300"/><path d="M6 12l8-5 9 5v9l-8 5-9-5z" fill="#c0142c"/><path d="M6 12l8-5 9 5-8 4z" fill="#f06a7c"/><path d="M15 16l8-4v9l-8 5z" fill="#8c0a20"/></symbol>
<symbol id="die" viewBox="0 0 30 30"><path d="M4 12h22v16H4z" fill="#d9d5c0" stroke="#555"/><path d="M5 3h20v6l-5 3v4l-3 3h-4l-3-3v-4L5 9z" fill="#f0b41c" stroke="#9a6c08"/></symbol>
<symbol id="blk2" viewBox="0 0 30 30"><path d="M2 4l6-3 6 3v16l-6 3-6-3z" fill="url(#gb)" stroke="#4a70b8"/><path d="M16 12l7-3 6 3v13l-6 4-7-4z" fill="url(#go)" stroke="#5a78c0"/><path d="M4 24h9M10 21l4 3-4 3" stroke="#c8641c" stroke-width="2" fill="none"/></symbol>
<symbol id="blk1" viewBox="0 0 30 30"><path d="M2 8l9-6 11 5v16l-9 6-11-6z" fill="url(#gb)" stroke="#4a70b8"/><path d="M12 12l10-5v16l-10 6z" fill="#fdb93c"/><path d="M15 17h7v-3l6 5-6 5v-3h-7z" fill="#e0781c"/></symbol>
<symbol id="blk3" viewBox="0 0 30 30"><path d="M2 4l7-3 7 3v9l-7 3-7-3z" fill="url(#gb)" stroke="#4a70b8"/><path d="M11 13q1 6 7 6M18 16l3 3-4 2" stroke="#d03a14" stroke-width="2.500" fill="none"/><path d="M24 11h6q2 16-16 18l-3-6q13 0 13-12" fill="url(#go)" stroke="#5a78c0"/></symbol>
<symbol id="rbcube" viewBox="0 0 30 30"><path d="M2 9l15 3v16L2 24z" fill="#f21818"/><path d="M17 12l11-6v16l-11 6z" fill="#1e50e0"/><path d="M2 9l11-6 15 3-11 6z" fill="#cfe4fa"/></symbol>
<symbol id="slot" viewBox="0 0 30 30"><path d="M1 10L14 3l6 3-9 5v5l5 2 13-8v11l-13 7-15-6z" fill="#b5cdf8" stroke="#2c3fb0" stroke-width="1.300"/><path d="M11 16V11l13-7 5 3v3l-13 8z" fill="#d5e3fc" stroke="#2c3fb0" stroke-width="1.300"/><path d="M16 18l13-8v11l-13 7z" fill="#8fb2ee" stroke="#2c3fb0"/></symbol>
<symbol id="slotg" viewBox="0 0 30 30"><use href="#slot"/><path d="M1 10L14 3l5 3-12 7zM12 16l13-8 4 2-13 8z" fill="#16806c" stroke="#0b5547"/></symbol>
<symbol id="rclamp" viewBox="0 0 30 30"><path d="M1 13l11-7 11 4 6 6v6l-8 3L1 19z" fill="#c80f18" stroke="#6b0208" stroke-width="1.300"/><path d="M1 14l20 5v6M21 19l8-3" stroke="#6b0208" fill="none"/><path d="M9 12q3-4 9 0" stroke="#6b0208" fill="none" stroke-width="1.500"/></symbol>
<symbol id="hexw" viewBox="0 0 30 30"><path d="M1 9L15 2l14 6v13l-14 7-14-6z" fill="#a9c8f6" stroke="#2c3fb0" stroke-width="1.500"/><path d="M6 10l9-5 10 5-2 8-8 4-9-4z" fill="#137866"/><path d="M10 19l4-7 8 7-7 4z" fill="#e6f5ff"/></symbol>
<symbol id="bound" viewBox="0 0 30 30"><path d="M3 5h24v6M3 5v5M2 13h6v6H2zM3 26h24v-6" stroke="#2222b8" stroke-width="2" fill="none"/><path d="M3 4l21 8-4 18M6 20L22 5l-19 10" stroke="#e030c8" stroke-width="1.800" fill="none" stroke-dasharray="3 1"/><path d="M10 9l15 14M23 8L9 22" stroke="#222" stroke-width="2.800"/></symbol>
<symbol id="flash" viewBox="0 0 30 30"><path d="M2 5l6-4 11 9 9 6-1 8-7 3-8-3-2-7z" fill="#a0a6b0"/><path d="M18 26q8-2 9-11 4 8-1 11-4 2-8 0" fill="#bcbda8"/></symbol>
<symbol id="newtool" viewBox="0 0 30 30"><path d="M3 13h7l2 12-5 4-5-4z" fill="#6a8ad8" stroke="#223a88"/><path d="M4 25l7-8" stroke="#fff" stroke-width="2"/><path d="M18 3h9v17h-7z" fill="#333c58"/><path d="M15 13h8v8h-8z" fill="#e8a72a" stroke="#8b5a08"/><use href="#star" x="1" y="1" width="14" height="14"/></symbol>
<symbol id="edtool" viewBox="0 0 30 30"><path d="M2 5l6-3 12 11 8 5v6l-6 5-8-4z" fill="#2c50c8" stroke="#16286c"/><ellipse cx="23" cy="22" rx="5" ry="4" fill="#f4e040" transform="rotate(-40 23 22)"/><path d="M2 24l10-9q-1-9 9-11l-3 5 4 4 5-2q-1 9-11 8l-9 8z" fill="url(#gy)" stroke="#8a6810"/></symbol>
<symbol id="waves" viewBox="0 0 30 30"><path d="M2 11q4 4 7 0 4 4 8 0 4 4 7 0l4-2v21H2z" fill="#d6ecf8" stroke="#225a98" stroke-width="1.600"/><path d="M2 18h26M2 22l4 4 4-4 4 4 4-4 4 4 4-4 2 2" stroke="#225a98" stroke-width="1.400" fill="none"/><use href="#star" x="2" y="0" width="14" height="14"/></symbol>
<symbol id="gwrench" viewBox="0 0 30 30"><path d="M2 24l11-9q-2-9 7-13l1 8 4 2 4-4q2 11-9 11L8 28q-5 1-6-4" fill="#b9b5a2" stroke="#a09d8e"/></symbol>
<symbol id="lock" viewBox="0 0 22 22"><path d="M7 12V6q0-4 4-4t4 4v6" fill="none" stroke="#a87c10" stroke-width="2"/><path d="M5 11h12v9H5z" fill="url(#gy)" stroke="#9a7210"/></symbol>
<symbol id="hatchb" viewBox="0 0 30 30"><path d="M3 16h24v12H3z" fill="#fff" stroke="#111" stroke-width="1.800"/><path d="M5 27l9-10M11 27l9-10M17 27l9-10M3 21l4-4M23 27l4-4" stroke="#222a90" stroke-width="1.500"/></symbol>
<symbol id="cp" viewBox="0 0 30 30"><use href="#hatchb"/><path d="M5 10h18M20 7l4 3-4 3z" stroke="#1c1cb8" stroke-width="1.500" fill="#1c1cb8"/></symbol>
<symbol id="ncm" viewBox="0 0 30 30"><use href="#hatchb"/><path d="M26 13V7M3 4v7M24 3H7M24 8l2-4 2 4zM1 9l2 4 2-4zM9 1L5 3l4 2z" stroke="#c01c24" stroke-width="1.300" fill="#c01c24"/></symbol>
<symbol id="feed" viewBox="0 0 30 30"><path d="M8 1h7v21H8z" fill="url(#gm)" stroke="#223a90"/><path d="M15 7q11 2 4 6-12 4-17-1-1-5 6-5" stroke="#b82222" stroke-width="2" fill="none"/><path d="M15 23h8v-3l6 5-6 4v-3h-8z" fill="#5a6ae0" stroke="#2630a0"/></symbol>
<symbol id="onew" viewBox="0 0 30 30"><use href="#mill" y="2" width="28" height="28"/><use href="#star" x="6" y="0" width="14" height="14"/></symbol>
<symbol id="r1" viewBox="0 0 30 30"><path d="M2 3l6-2 5 2v5l4 2v5l-6 2-9-3z" fill="url(#gy)" stroke="#b98a10"/><path d="M19 16h10M7 17v13M7 24h8" stroke="#2a3a90" stroke-width="2" fill="none"/><path d="M17 22l6-3 5 2v6l-6 3-5-2z" fill="url(#go)" stroke="#a86a10"/></symbol>
<symbol id="r2" viewBox="0 0 30 30"><path d="M5 1v12l9-6zM25 1v12l-9-6z" fill="#1822c0"/><path d="M15 0v30" stroke="#222" stroke-dasharray="4 2" stroke-width="1.500"/><path d="M1 18h10v11H1z" fill="#f8e820" stroke="#a08a10" stroke-width="1.500"/><path d="M18 17l11 12H18z" fill="#d02018" stroke="#700"/></symbol>
<symbol id="r3" viewBox="0 0 30 30"><path d="M1 3v8q6 4 12 0V3" fill="#d884b8" stroke="#8a2a6a"/><ellipse cx="7" cy="3" rx="6" ry="2.500" fill="#f4c4e0" stroke="#8a2a6a"/><path d="M17 12h12M7 15v14M7 23h6" stroke="#2a3a90" stroke-width="2"/><circle cx="21" cy="23" r="5.500" fill="#f8dce8" stroke="#9a2a6a" stroke-width="2"/><circle cx="21" cy="23" r="2" fill="#9a2a6a"/></symbol>
<symbol id="r4" viewBox="0 0 30 30"><path d="M4 1h5v13H4zM9 4h11l-4 3H9M9 9h8l-4 3H9" fill="#3a80d8" stroke="#2a5ab0"/><path d="M17 13h12M7 16v14M7 24h7" stroke="#2a3a90" stroke-width="2"/><path d="M17 20h5v4h4v5h-9z" fill="#fff" stroke="#3a62c0" stroke-width="1.500"/></symbol>
<symbol id="r5" viewBox="0 0 30 30"><path d="M1 8L19 2v16L1 21z" fill="#fff6d8" stroke="#e08a20" stroke-width="1.500"/><path d="M1 12l18-5M1 17l18-5M7 6v14M13 4v14" stroke="#e08a20"/><path d="M10 19l10-5 10 4v7l-9 4-11-4z" fill="#2a62d8"/><path d="M10 19l10-5 10 4-9 4z" fill="#f9b040"/></symbol>
<symbol id="r6" viewBox="0 0 30 30"><path d="M2 9h17v17H2zM6 12h5v7H6zM14 9v17" fill="#ddd" stroke="#444" stroke-width="1.500"/><path d="M9 7q5-6 10-2M19 3l5-2 5 2v6l-5 2-5-2z" fill="#fbc060" stroke="#e0641c" stroke-width="1.500"/><path d="M20 27q2-7 9-9M22 28h7" stroke="#444" stroke-width="2" fill="none"/></symbol>
<symbol id="r7" viewBox="0 0 30 30"><path d="M1 8l6-5h22v17l-8 7H1z" fill="#e9eef0"/><path d="M1 8h7v19H1zM1 8l6-5h7L8 8" fill="#f29a2c" stroke="#a85a08"/><path d="M10 8h7v19h-7zM10 8l6-5h5l-4 5" fill="#34b83c" stroke="#1a7020"/><path d="M19 8h4v19h-4zM23 8l6-5v18l-6 6z" fill="#3f86e0" stroke="#1b4c98"/></symbol>
<symbol id="r8" viewBox="0 0 30 30"><circle cx="11" cy="20" r="9.500" fill="#2878d4" stroke="#1a4c9c"/><path d="M10 13h3v3h-3zM8 17h5v7h2v2H8v-2h2v-5H8z" fill="#fff"/><path d="M11 6q12 0 13 13M11 2q17 0 18 17" stroke="#3f68b8" stroke-width="2.500" fill="none"/></symbol>
<symbol id="r9" viewBox="0 0 30 30"><path d="M4 1h14l8 8v20H4z" fill="#fff" stroke="#3a74c0" stroke-width="1.500"/><path d="M18 1v8h8" fill="none" stroke="#3a74c0"/><circle cx="15" cy="18" r="7.500" fill="#3a78c8"/><path d="M15 11q6 3 6 11-6 5-12 0 1-9 6-11" fill="#3c9a50"/><path d="M15 12l4 9h-8z" fill="#cfe"/></symbol>
<symbol id="r10" viewBox="0 0 30 30"><circle cx="15" cy="15" r="13" fill="#e2eefa" stroke="#7b8794" stroke-width="2.500"/><circle cx="15" cy="15" r="9" fill="none" stroke="#456" stroke-dasharray="1 3.700"/><path d="M15 5v10h9" stroke="#111" stroke-width="2.500" fill="none"/></symbol>
<symbol id="r11" viewBox="0 0 30 30"><path d="M2 2h11v26H2z" fill="url(#rb)"/><circle cx="14" cy="8" r="5" fill="#fff" opacity=".85"/><path d="M16 12l10 15" stroke="#111" stroke-width="4"/></symbol>
<symbol id="r12" viewBox="0 0 30 30"><path d="M3 12h9v14H3z" fill="#4a8ae0"/><path d="M12 20q4-4 8-2h9M14 24q3-3 6-2h9" fill="none" stroke="#3a68b0" stroke-width="2"/></symbol>
</defs></svg>

<div class="app-frame d-flex flex-column">
<header class="title-strip d-flex align-items-center flex-shrink-0">
 <svg width="22" height="24" class="flex-shrink-0 mb-2 me-1"><use href="#nx"/></svg>
 <span class="text-nowrap">NX10 青木老师QQ:1574092151 - 加工 - [A5_0.prt （修改的） ]</span>
 <span class="brand-word ms-auto">SIEMENS</span>
 <button class="win-btn ms-0" aria-label="最小化"><svg viewBox="0 0 22 22"><path d="M4 14h8v4H4z" fill="#fff"/></svg></button>
 <button class="win-btn" aria-label="最大化"><svg viewBox="0 0 22 22"><path d="M4 6h13v11H4z" fill="none" stroke="#fff" stroke-width="1.500"/><path d="M3 4h15v4H3z" fill="#fff"/></svg></button>
 <button class="win-btn closer" aria-label="关闭"><svg viewBox="0 0 22 22"><path d="M5 5l12 12M17 5L5 17" stroke="#fff" stroke-width="3"/></svg></button>
</header>

<nav class="menu-strip d-flex align-items-center flex-shrink-0">
 <div class="left-part d-flex align-items-center">
  <span class="grip"></span><svg width="21" height="20" class="flex-shrink-0" style="margin-right:6px"><use href="#mill"/></svg>
  <a href="#">文件<span class="ltn">(<u>F</u>)</span></a><a href="#">编辑<span class="ltn">(<u>E</u>)</span></a><a href="#">视图<span class="ltn">(<u>V</u>)</span></a><a href="#">插入<span class="ltn">(<u>S</u>)</span></a><a href="#">格式<span class="ltn">(<u>R</u>)</span></a><a href="#">工具<span class="ltn">(<u>T</u>)</span></a><a href="#">装配<span class="ltn">(<u>A</u>)</span></a>
 </div>
 <div class="right-part d-flex align-items-center">
  <a href="#" class="w-auto me-3">箱</a><a href="#" class="w-auto me-3">星空外挂 <span style="font:13px var(--mono)" class="ms-1">V6.935F</span></a><a href="#">帮助<span class="ltn">(<u>H</u>)</span></a>
  <span class="ms-auto"></span>
  <button class="mdi" aria-label="最小化窗口"><svg viewBox="0 0 18 18"><path d="M4 11h9v3H4z" fill="#555"/></svg></button>
  <button class="mdi" aria-label="还原窗口"><svg viewBox="0 0 18 18"><path d="M6 3h9v7M3 7h8v7H3zM3 8h8" fill="none" stroke="#555" stroke-width="2"/></svg></button>
  <button class="mdi me-2" aria-label="关闭窗口"><svg viewBox="0 0 18 18"><path d="M4 4l10 10M14 4L4 14" stroke="#555" stroke-width="3.500"/></svg></button>
 </div>
</nav>

<div class="tool-strip d-flex flex-shrink-0">
 <div class="left-part d-flex align-items-center">
  <span class="grip"></span><button class="ic" aria-label="NX"><svg><use href="#nx"/></svg></button><button class="text-nowrap flex-shrink-0" style="width:32px">启动</button><span class="crt"></span>
  <button class="ic" aria-label="新建"><svg><use href="#new"/></svg></button><button class="ic" aria-label="打开"><svg><use href="#open"/></svg></button><button class="ic" aria-label="保存"><svg><use href="#save"/></svg></button><button class="ic" aria-label="打印"><svg><use href="#print"/></svg></button><span class="sp"></span>
  <button class="ic" aria-label="剪切"><svg><use href="#cut"/></svg></button><button class="ic" aria-label="复制"><svg><use href="#copy"/></svg></button><button class="ic" aria-label="粘贴"><svg><use href="#paste"/></svg></button><button class="ic" aria-label="删除"><svg><use href="#xx"/></svg></button><span class="sp thin"></span>
  <button class="ic" aria-label="撤销"><svg><use href="#undo"/></svg></button><span class="crt"></span><button class="ic" aria-label="重做"><svg style="transform:scaleX(-1)"><use href="#undo"/></svg></button>
 </div>
 <div class="right-part d-flex align-items-center ps-1">
  <button class="ic" aria-label="线框"><svg><use href="#cubew"/></svg></button><button class="ic" aria-label="着色"><svg><use href="#cubes"/></svg></button><button class="ic" aria-label="背景"><svg><use href="#winb"/></svg></button><span class="crt"></span><span class="sp"></span>
  <button class="ic" aria-label="剖切"><svg><use href="#door2"/></svg></button><span class="crt low"></span><span class="sp"></span><span class="grip"></span>
  <select class="nx-select ms-1" style="width:53px;margin-right:6px;padding-left:1px" aria-label="图层"><option>254</option></select>
  <button class="ic" aria-label="图层设置"><svg><use href="#layers"/></svg></button><button class="ic" aria-label="坐标系"><svg><use href="#csys"/></svg></button><span class="crt"></span><span class="sp"></span>
  <button class="ic" aria-label="显示隐藏"><svg><use href="#hand"/></svg></button><button class="ic" aria-label="对象显示"><svg><use href="#pal"/></svg></button><span class="sp"></span>
  <button class="ic" aria-label="播放"><svg><use href="#play"/></svg></button><span class="crt"></span><span class="sp"></span>
  <button class="ic" aria-label="测量面"><svg><use href="#meas"/></svg></button><span class="crt"></span><button class="ic" aria-label="测量长度"><svg><use href="#spring"/></svg></button><span class="crt"></span><button class="ic" aria-label="测量距离"><svg><use href="#dist"/></svg></button><span class="crt low"></span><span class="sp"></span><span class="grip"></span>
  <button class="ic" aria-label="移动面"><svg><use href="#pc1"/></svg></button><button class="ic" aria-label="拉出面"><svg><use href="#pc2"/></svg></button><button class="ic" aria-label="偏置区域"><svg><use href="#pc3"/></svg></button><button class="ic" aria-label="调整大小"><svg><use href="#pc4"/></svg></button><button class="ic" aria-label="替换面"><svg><use href="#pc5"/></svg></button><button class="ic" aria-label="删除面"><svg><use href="#pc6"/></svg></button><button class="ic" aria-label="组面"><svg><use href="#pc7"/></svg></button><span class="crt low"></span><span class="sp"></span>
 </div>
</div>

<div class="tool-strip d-flex flex-shrink-0">
 <div class="left-part d-flex align-items-center">
  <span class="grip"></span><button class="ic" aria-label="建模"><svg><use href="#lpart"/></svg></button><button class="ic" aria-label="外观造型"><svg><use href="#sket"/></svg></button><button class="ic" aria-label="加工"><svg><use href="#mill"/></svg></button><span class="sp"></span>
  <button class="ic" aria-label="模具"><svg><use href="#mold"/></svg></button><button class="ic on" aria-label="铣削"><svg><use href="#cutter"/></svg></button><span class="sp"></span><button class="ic" aria-label="退出"><svg><use href="#door"/></svg></button><span class="crt low"></span><span class="sp"></span>
 </div>
 <div class="right-part d-flex align-items-center">
  <button class="ic" style="margin-left:-20px" aria-label="信息"><svg><use href="#info"/></svg></button><button class="ic" aria-label="分析"><svg><use href="#torch"/></svg></button><span class="crt low"></span><span class="sp"></span><span class="grip"></span>
  <button class="ic" aria-label="直线"><svg><use href="#line"/></svg></button><button class="ic" aria-label="圆弧"><svg><use href="#arc"/></svg></button><button class="ic" aria-label="圆"><svg><use href="#circ"/></svg></button><button class="ic" aria-label="矩形"><svg><use href="#rect"/></svg></button><button class="ic" aria-label="艺术样条"><svg><use href="#studio"/></svg></button><button class="ic" aria-label="样条"><svg><use href="#spl"/></svg></button><button class="ic" aria-label="文本" style="font:bold 34px/30px 'Liberation Serif',serif">A</button><button class="ic" aria-label="偏置曲线"><svg><use href="#offs"/></svg></button><button class="ic" aria-label="面上偏置"><svg><use href="#surfa"/></svg></button><button class="ic" aria-label="桥接"><svg><use href="#curv"/></svg></button><button class="ic" aria-label="投影"><svg><use href="#curv2"/></svg></button><button class="ic" aria-label="组合投影"><svg><use href="#proj"/></svg></button><button class="ic" aria-label="相交"><svg><use href="#inter"/></svg></button><button class="ic" aria-label="缠绕"><svg><use href="#cylarc"/></svg></button><span class="crt low"></span><span class="sp thin"></span><span class="grip"></span>
  <button class="ic" aria-label="编辑参数"><svg><use href="#wdoc"/></svg></button><button class="ic" aria-label="修剪曲线"><svg><use href="#t1"/></svg></button><button class="ic" aria-label="修剪拐角"><svg><use href="#t2"/></svg></button><button class="ic" aria-label="分割"><svg><use href="#t3"/></svg></button><button class="ic" aria-label="圆角"><svg><use href="#t4"/></svg></button><button class="ic" aria-label="拉长"><svg><use href="#t5"/></svg></button><button class="ic" aria-label="长度"><svg><use href="#t6"/></svg></button><button class="ic" aria-label="光顺"><svg><use href="#t7"/></svg></button><span class="crt low"></span>
 </div>
</div>

<div class="tool-strip d-flex flex-shrink-0">
 <div class="left-part d-flex align-items-center">
  <span class="grip"></span><button class="ic" aria-label="绝对坐标"><svg><use href="#abs"/></svg></button><button class="ic" aria-label="删除尺寸"><svg><use href="#xdim"/></svg></button><button class="ic" aria-label="后退"><svg><use href="#larr"/></svg></button><button class="ic" aria-label="前进"><svg><use href="#rarr"/></svg></button><button class="ic" aria-label="互换"><svg><use href="#swap"/></svg></button><button class="ic" aria-label="移动"><svg><use href="#two"/></svg></button><button class="ic" aria-label="基座"><svg><use href="#ped"/></svg></button><button class="ic" aria-label="尺寸"><svg><use href="#boxr"/></svg></button><button class="ic" aria-label="包容体"><svg><use href="#bbox"/></svg></button><button class="ic" aria-label="半径"><svg><use href="#rad"/></svg></button><button class="ic" aria-label="线框体"><svg><use href="#wirebox"/></svg></button><button class="ic" aria-label="曲面"><svg><use href="#surfx"/></svg></button><button class="ic" aria-label="颜色"><svg><use href="#rainb"/></svg></button>
 </div>
 <div class="right-part d-flex align-items-center">
  <button class="ic" style="margin-left:-20px" aria-label="拔模"><svg><use href="#fan"/></svg></button><button class="ic" aria-label="灯光"><svg><use href="#lamp"/></svg></button><button class="ic" aria-label="圆环"><svg><use href="#ring"/></svg></button><span class="crt low"></span><span class="sp thin"></span><span class="grip"></span>
  <button class="ic" aria-label="属性"><svg><use href="#bw"/></svg></button><button class="ic" style="font:900 25px/30px var(--cjk);color:#11c">名</button><span class="crt low"></span><span class="sp thin"></span><span class="grip"></span>
  <button class="ic" aria-label="创建程序"><svg><use href="#gridn"/></svg></button><button class="ic" aria-label="创建刀具"><svg><use href="#cyl2"/></svg></button><button class="ic" aria-label="生成刀轨"><svg><use href="#hat"/></svg></button><button class="ic" aria-label="机床"><svg><use href="#mach"/></svg></button><button class="ic" aria-label="后处理"><svg><use href="#mach2"/></svg></button><button class="ic" aria-label="工具"><svg><use href="#wball"/></svg></button><button class="ic" aria-label="文字"><svg><use href="#aedit"/></svg></button><button class="ic" aria-label="刀具库"><svg><use href="#tools2"/></svg></button><button class="ic" aria-label="计算器"><svg><use href="#calc"/></svg></button><span class="crt low"></span><span class="sp thin"></span><span class="grip"></span>
  <button class="ic" aria-label="工件"><svg><use href="#redc"/></svg></button><button class="ic" aria-label="模腔"><svg><use href="#die"/></svg></button><button class="ic" aria-label="移动块"><svg><use href="#blk2"/></svg></button><button class="ic" aria-label="拉伸块"><svg><use href="#blk1"/></svg></button><button class="ic" aria-label="旋转块"><svg><use href="#blk3"/></svg></button><span class="crt low"></span><span class="sp thin"></span><span class="grip"></span>
  <button class="ic"><span class="bg-white" style="width:31px;height:31px;font:14px/15px var(--cjk);color:#7a9a1c">重生<br>视图</span></button><span class="sp"></span><button class="ic" aria-label="颜色块"><svg><use href="#rbcube"/></svg></button><span class="sp"></span><button class="ic" aria-label="毛坯"><svg><use href="#redc"/></svg></button><span class="crt low"></span><span class="sp"></span>
 </div>
</div>

<div class="pick-strip d-flex align-items-center flex-shrink-0">
 <div class="left-part d-flex align-items-center ps-2">
  <select class="nx-select off flex-shrink-0" style="width:144px" disabled aria-label="类型过滤器"><option></option></select>
  <select class="nx-select off flex-shrink-0 px-0" style="width:154px;margin-left:11px" disabled aria-label="选择范围"><option>整个装配</option></select>
  <button class="ic" aria-label="链接"><svg width="24" height="24"><use href="#glink"/></svg></button><span class="sp thin"></span>
  <button class="flex-shrink-0" aria-label="过滤"><svg width="24" height="24"><use href="#gfunn"/></svg></button><button class="flex-shrink-0" aria-label="捕捉"><svg width="28" height="28"><use href="#snapbox"/></svg></button><span class="crt"></span><button class="flex-shrink-0" aria-label="路径"><svg width="27" height="26"><use href="#gpath"/></svg></button><button class="flex-shrink-0 ms-1" aria-label="锤"><svg width="24" height="26"><use href="#gham"/></svg></button><span class="sp"></span>
 </div>
 <span class="crt ms-auto me-1 pt-2"></span>
</div>

<main class="d-flex flex-grow-1" style="min-height:0">
 <aside class="res-bar d-flex flex-column">
  <div class="res-gear flex-shrink-0"><button aria-label="设置"><svg width="18" height="18" viewBox="0 0 18 18"><circle cx="9" cy="9" r="6" fill="none" stroke="#222" stroke-width="1.700"/><circle cx="9" cy="9" r="7.500" fill="none" stroke="#222" stroke-width="2" stroke-dasharray="2 3.900"/><circle cx="9" cy="9" r="1.200"/></svg></button></div>
  <button class="res-tab" aria-label="装配导航器"><svg><use href="#r1"/></svg></button><button class="res-tab" aria-label="约束导航器"><svg><use href="#r2"/></svg></button><button class="res-tab" aria-label="部件导航器"><svg><use href="#r3"/></svg></button><button class="res-tab live" aria-label="工序导航器"><svg><use href="#r4"/></svg></button><button class="res-tab" aria-label="特征导航器"><svg><use href="#r5"/></svg></button><button class="res-tab" aria-label="机床导航器"><svg><use href="#r6"/></svg></button><button class="res-tab" aria-label="重用库"><svg><use href="#r7"/></svg></button><button class="res-tab gap-top" aria-label="信息"><svg><use href="#r8"/></svg></button><button class="res-tab gap-top" aria-label="浏览器"><svg><use href="#r9"/></svg></button><button class="res-tab gap-top" aria-label="历史记录"><svg><use href="#r10"/></svg></button><button class="res-tab" aria-label="材料"><svg><use href="#r11"/></svg></button><button class="res-tab cut-off" aria-label="角色"><svg><use href="#r12"/></svg></button>
  <button class="pgr" aria-label="顶部"><svg viewBox="0 0 18 18"><path d="M5 4h8M9 7l4 5H5z" stroke="#999" fill="#999"/></svg></button><button class="pgr" aria-label="上"><svg viewBox="0 0 18 18"><path d="M9 6l5 6H4z" fill="#999"/></svg></button><button class="pgr" aria-label="下"><svg viewBox="0 0 18 18"><path d="M9 12L4 6h10z" fill="#444"/></svg></button><button class="pgr" aria-label="底部"><svg viewBox="0 0 18 18"><path d="M9 10L4 5h10zM4 13h10v1H4z" fill="#444"/></svg></button>
 </aside>

 <section class="nav-pane">
  <div class="nav-title d-flex align-items-center justify-content-between"><span>工序导航器 - 机床</span><button aria-label="最大化面板"><svg width="18" height="16" viewBox="0 0 18 16"><path d="M1 2h16v13H1z" fill="#fff" stroke="#111" stroke-width="1.500"/><path d="M0 0h18v3H0z"/></svg></button></div>
  <div class="grid-box">
   <table class="op-grid">
    <colgroup><col style="width:162px"><col style="width:50px"><col style="width:69px"><col style="width:67px"><col></colgroup>
    <thead><tr><th>名称</th><th>刀轨</th><th>刀具</th><th>刀具号</th><th>几何体</th></tr></thead>
    <tbody>
    <tr><td>GENERIC_MACHINE</td><td></td><td></td><td></td><td></td></tr>
    <tr><td><div class="tree-row"><svg width="44" height="24"><path d="M9 24V12h12" stroke="#888" stroke-dasharray="1 2" fill="none"/><path d="M23 5h6l2 2h9v13H23z" fill="#f0e2a0" stroke="#998a40"/><path d="M38 10h-5v3h4v4h-5" fill="none" stroke="#2028a0" stroke-width="1.500"/></svg><span class="han-txt">未用项</span></div></td><td></td><td></td><td></td><td></td></tr>
    <tr><td><div class="tree-row"><svg width="44" height="24"><path d="M9 0v24M9 12h12" stroke="#888" stroke-dasharray="1 2" fill="none"/><path d="M28 3h8v18h-8z" fill="url(#gm)" stroke="#2a3280"/><path d="M28 8l8-3M28 13l8-3M28 18l8-3" stroke="#2a3280"/></svg>D4-0.07</div></td><td></td><td></td><td>0</td><td></td></tr>
    <tr><td><div class="tree-row"><svg width="44" height="24"><path d="M9 0v24M9 12h12" stroke="#888" stroke-dasharray="1 2" fill="none"/><path d="M28 3h8v18h-8z" fill="url(#gm)" stroke="#2a3280"/><path d="M28 8l8-3M28 13l8-3M28 18l8-3" stroke="#2a3280"/></svg>D4R2</div></td><td></td><td></td><td>0</td><td></td></tr>
    <tr><td><div class="tree-row"><svg width="44" height="24"><path d="M9 0v24M9 12h12" stroke="#888" stroke-dasharray="1 2" fill="none"/><path d="M28 3h8v18h-8z" fill="url(#gm)" stroke="#2a3280"/><path d="M28 8l8-3M28 13l8-3M28 18l8-3" stroke="#2a3280"/></svg>D10</div></td><td></td><td></td><td>0</td><td></td></tr>
    <tr><td><div class="tree-row"><svg width="44" height="24"><path d="M9 0v6M16 12h5" stroke="#888" stroke-dasharray="1 2" fill="none"/><rect x="3" y="7" width="10" height="10" rx="2" fill="#fff" stroke="#777"/><path d="M5 12h6" stroke="#222"/><path d="M28 3h8v18h-8z" fill="url(#gm)" stroke="#2a3280"/><path d="M28 8l8-3M28 13l8-3M28 18l8-3" stroke="#2a3280"/></svg>D30R5</div></td><td></td><td></td><td>2</td><td></td></tr>
    <tr class="hot"><td><div class="tree-row"><svg width="90" height="24"><path d="M34 0v12h12" stroke="#888" stroke-dasharray="1 2" fill="none"/><circle cx="56" cy="12" r="7.500" fill="#fff" stroke="#d01820" stroke-width="3"/><path d="M51 17L61 7" stroke="#d01820" stroke-width="3"/><path d="M67 2h4v9h-4z" fill="#4a50c0"/><path d="M68 12l8-4 10 4v5l-8 5-10-5z" fill="#8e928c" stroke="#555"/><path d="M68 12l8-4 10 4-8 4z" fill="#c7cbc4"/></svg>FLOOR...</div></td><td><svg width="20" height="20"><path d="M2 3l16 15M17 2L3 18" stroke="#223" stroke-width="2.500"/></svg></td><td>D30R5</td><td>2</td><td>MCS_MILL</td></tr>
    <tr><td></td><td></td><td></td><td></td><td></td></tr><tr><td></td><td></td><td></td><td></td><td></td></tr><tr><td></td><td></td><td></td><td></td><td></td></tr><tr><td></td><td></td><td></td><td></td><td></td></tr><tr><td></td><td></td><td></td><td></td><td></td></tr><tr><td></td><td></td><td></td><td></td><td></td></tr><tr><td></td><td></td><td></td><td></td><td></td></tr>
    <tr><td></td><td></td><td></td><td></td><td></td></tr><tr><td></td><td></td><td></td><td></td><td></td></tr><tr><td></td><td></td><td></td><td></td><td></td></tr><tr><td></td><td></td><td></td><td></td><td></td></tr><tr><td></td><td></td><td></td><td></td><td></td></tr><tr><td></td><td></td><td></td><td></td><td></td></tr><tr><td></td><td></td><td></td><td></td><td></td></tr>
    <tr><td></td><td></td><td></td><td></td><td></td></tr><tr><td></td><td></td><td></td><td></td><td></td></tr><tr><td></td><td></td><td></td><td></td><td></td></tr><tr><td></td><td></td><td></td><td></td><td></td></tr><tr><td></td><td></td><td></td><td></td><td></td></tr><tr><td></td><td></td><td></td><td></td><td></td></tr><tr><td></td><td></td><td></td><td></td><td></td></tr>
    </tbody>
   </table>
   <div class="hscroll"><svg width="8" height="10" class="position-absolute" style="left:8px;top:6px"><path d="M6 0v10L1 5z" fill="#333"/></svg><div class="hthumb"></div></div>
  </div>
  <div class="d-flex align-items-center gap-2 mt-1"><div class="split-line flex-grow-1"></div><div class="split-thumb"></div><div class="split-line flex-grow-1"></div></div>
 </section>

 <section class="scene flex-grow-1">
  <svg viewBox="504 232 1413 815" aria-label="零件模型">
   <defs>
    <linearGradient id="body" gradientUnits="userSpaceOnUse" x1="0" y1="454" x2="0" y2="783"><stop stop-color="#c98b48"/><stop offset=".3" stop-color="#bd8145"/><stop offset=".5" stop-color="#a87139"/><stop offset=".65" stop-color="#855a2c"/><stop offset=".8" stop-color="#5a3c1d"/><stop offset=".92" stop-color="#3d2813"/><stop offset="1" stop-color="#3a2716"/></linearGradient>
    <linearGradient id="deck" gradientUnits="userSpaceOnUse" x1="1150" y1="495" x2="1160" y2="740"><stop stop-color="#c88a49"/><stop offset=".3" stop-color="#b87c40"/><stop offset=".6" stop-color="#9a6833"/><stop offset=".85" stop-color="#855829"/><stop offset=".95" stop-color="#6b4721"/><stop offset="1" stop-color="#4a3118"/></linearGradient>
    <linearGradient id="fade" x1="0" x2="1"><stop stop-color="#9a6833" stop-opacity="0"/><stop offset=".4" stop-color="#9c6a35" stop-opacity=".8"/><stop offset="1" stop-color="#9c6834"/></linearGradient>
    <radialGradient id="glow" gradientUnits="userSpaceOnUse" cx="1455" cy="546" r="130"><stop stop-color="#fbbd7b"/><stop offset=".25" stop-color="#f0b06e" stop-opacity=".9"/><stop offset=".55" stop-color="#d6964f" stop-opacity=".5"/><stop offset="1" stop-color="#c98b48" stop-opacity="0"/></radialGradient>
    <clipPath id="hull"><path d="M1106 495C1180 468 1270 453 1324 454C1400 455 1455 471 1489 493C1525 520 1548 555 1553 591H1535C1518 591 1505 603 1505 618S1518 644 1533 644H1553C1548 680 1520 722 1471 748C1430 772 1390 783 1335 783C1260 780 1180 765 1106 740Z"/></clipPath>
   </defs>
   <path d="M1083 424H1582V799L1569 812H1083Z" fill="#a36f38"/>
   <g clip-path="url(#hull)"><path d="M1100 450H1560V790H1100z" fill="url(#body)"/><circle cx="1455" cy="546" r="130" fill="url(#glow)"/></g>
   <path d="M1108 511C1160 504 1220 495 1256 496H1292C1360 500 1414 550 1415 618C1414 690 1360 740 1267 740C1210 738 1160 735 1106 725Z" fill="url(#deck)"/>
   <path d="M1266 496H1292C1360 500 1414 550 1415 618C1414 690 1360 740 1267 740Z" fill="url(#fade)" opacity=".7"/>
   <path d="M1106 495L1109 511Q1123 618 1108 728L1106 740z" fill="#6b4a26"/>
   <g fill="none" stroke="#3a2c1c" stroke-width="1.200">
    <path d="M1106 495C1180 468 1270 453 1324 454C1400 455 1455 471 1489 493C1525 520 1548 555 1553 591H1535C1518 591 1505 603 1505 618S1518 644 1533 644H1553C1548 680 1520 722 1471 748C1430 772 1390 783 1335 783C1260 780 1180 765 1106 740Z" stroke-width="1.800"/>
    <path d="M1108 511C1160 504 1220 495 1256 496H1292C1360 500 1414 550 1415 618C1414 690 1360 740 1267 740C1210 738 1160 735 1106 725M1292 495L1378 457M1109 511Q1123 618 1108 728M1266 496L1262 562M1262 674L1266 740M1370 526Q1360 618 1370 710"/>
    <rect x="1194" y="563" width="83" height="111" rx="4" fill="#a36f38" stroke-width="2"/>
   </g>
   <path d="M1332 616V510" stroke="#249a2c" stroke-width="4"/><path d="M1333 483l5 26h-10zM1332 545l4 30h-8z" fill="#249a2c"/>
   <path d="M1334 618H1450" stroke="#cc3434" stroke-width="4"/><path d="M1467 618l-28 5v-10zM1400 618l-26 4v-8z" fill="#d63a3a"/>
   <circle cx="1332" cy="618" r="5" fill="#1744c8"/>
   <g font-family="Liberation Sans" font-size="15"><text x="1339" y="481" fill="#3a9a2c">YM</text><text x="1339" y="543" fill="#3a9a2c">YC</text><text x="1386" y="611" fill="#cc3a30">XC</text><text x="1446" y="611" fill="#cc3a30">XM</text><text x="1333" y="616" font-size="14" fill="#2a50e0">ZM</text></g>
  </svg>
  <div class="floater">
   <div class="ft d-flex align-items-center justify-content-end"><svg width="42" height="26"><path d="M1 10h8l-4 5z" fill="#fff"/><path d="M18 1v24" stroke="#bbb"/><path d="M25 8l11 11M36 8L25 19" stroke="#fff" stroke-width="3.500"/></svg></div>
   <div class="fb d-flex justify-content-end"><button class="fbtn"><svg><use href="#newtool"/></svg>创建刀具</button><button class="fbtn"><svg><use href="#r1"/></svg>创建几何</button><button class="fbtn"><svg><use href="#waves"/></svg>创建方法</button><button class="fbtn"><svg><use href="#onew"/></svg>创建工序</button></div>
   <div class="ff"></div>
  </div>
 </section>
</main>
<footer class="status-strip d-flex align-items-center flex-shrink-0"><span>指定参数</span><span class="sp ms-auto"></span><span class="sp ms-3"></span><svg width="22" height="22" viewBox="0 0 22 22"><path d="M1 6V1h5M16 1h5v5M21 16v5h-5M6 21H1v-5" fill="none" stroke="#999" stroke-width="1.500"/><path d="M5 6h12v10H5z" fill="#fff" stroke="#444" stroke-width="2"/><path d="M7 8h8v6H7z" fill="#3a7ad0"/></svg><span class="sp" style="margin:0 19px 0 44px"></span></footer>
</div>

<aside class="op-dialog">
 <form class="op-body">
  <div class="op-rows">
   <div class="peek"><button type="button" class="sq" aria-label="新建几何体"><svg><use href="#slot"/></svg></button><button type="button" class="sq" aria-label="编辑几何体"><svg><use href="#edtool"/></svg></button></div>
   <div class="prow"><span>指定部件</span><button type="button" class="sq" aria-label="部件"><svg><use href="#slot"/></svg></button><button type="button" class="sq" disabled aria-label="显示部件"><svg><use href="#flash"/></svg></button></div>
   <div class="prow"><span>指定检查体</span><button type="button" class="sq" aria-label="检查体"><svg><use href="#rclamp"/></svg></button><button type="button" class="sq" disabled aria-label="显示检查体"><svg><use href="#flash"/></svg></button></div>
   <div class="prow"><span>指定切削区底面</span><button type="button" class="sq" aria-label="底面"><svg><use href="#slotg"/></svg></button><button type="button" class="sq" disabled aria-label="显示底面"><svg><use href="#flash"/></svg></button></div>
   <div class="prow"><span>指定壁几何体</span><button type="button" class="sq" aria-label="壁"><svg><use href="#hexw"/></svg></button><button type="button" class="sq" disabled aria-label="显示壁"><svg><use href="#flash"/></svg></button></div>
   <div class="prow row27"><input class="tick me-1" type="checkbox" id="autowall"><label for="autowall">自动壁</label></div>
   <div class="prow"><span>指定修剪边界</span><button type="button" class="sq" aria-label="修剪边界"><svg><use href="#bound"/></svg></button><button type="button" class="sq" disabled aria-label="显示边界"><svg><use href="#flash"/></svg></button></div>
  </div>
  <button type="button" class="sect" style="margin-top:10px">工具<svg class="chev" viewBox="0 0 16 18"><path d="M2 15l6-11 6 11" stroke="#555" stroke-width="3" fill="none"/></svg></button>
  <div class="op-rows pb-2" style="padding-top:9px">
   <div class="prow head-row"><label for="tool">刀具</label><select id="tool" class="nx-select" style="width:109px"><option>D30R5 （飞刀）</option></select><button type="button" class="sq" aria-label="新建刀具"><svg><use href="#newtool"/></svg></button><button type="button" class="sq" aria-label="编辑刀具"><svg><use href="#edtool"/></svg></button></div>
   <div class="subgrp" style="padding:0 0 12px">
    <button type="button" class="subhead mb-1">输出<svg width="18" height="14" viewBox="0 0 18 14"><path d="M2 13L9 2l7 11" stroke="#666" stroke-width="3" fill="none"/></svg></button>
    <div class="prow row34 px-2 pe-3"><label for="f1">刀具号</label><span class="position-relative d-flex"><input id="f1" class="nx-input num-right" value="2"><svg class="beam" viewBox="0 0 10 20"><path d="M1 1h3l1 1 1-1h3M5 2v16M1 19h3l1-1 1 1h3" stroke="#000" stroke-width="1.500" fill="none" stroke-dasharray="3 1"/></svg></span><button type="button" class="sq mini" aria-label="锁定"><svg><use href="#lock"/></svg></button><input type="checkbox" class="tick" checked aria-label="刀具号继承"></div>
    <div class="prow row34 px-2 pe-3"><label for="f2">补偿寄存器</label><input id="f2" class="nx-input num-right" value="2"><button type="button" class="sq mini" aria-label="锁定"><svg><use href="#lock"/></svg></button><input type="checkbox" class="tick" checked aria-label="补偿继承"></div>
    <div class="prow row34 px-2 pe-3"><label for="f3">刀具补偿寄存器</label><input id="f3" class="nx-input num-right" value="0"><button type="button" class="sq mini" aria-label="锁定"><svg><use href="#lock"/></svg></button><input type="checkbox" class="tick" aria-label="刀具补偿继承"></div>
    <div class="prow row34 px-2 pe-3"><label for="f4">Z 偏置</label><input id="f4" class="nx-input" value="0.00000"><button type="button" class="sq mini" aria-label="锁定"><svg><use href="#lock"/></svg></button><input type="checkbox" class="tick" aria-label="偏置继承"></div>
   </div>
   <div class="subgrp" style="margin-top:1px"><button type="button" class="subhead" style="height:24px">换刀设置<svg width="18" height="14" viewBox="0 0 18 14"><path d="M2 1l7 11 7-11" stroke="#666" stroke-width="3" fill="none"/></svg></button></div>
  </div>
  <button type="button" class="sect" style="margin-top:4px">刀轴<svg class="chev" viewBox="0 0 16 18"><path d="M2 4l6 11 6-11" stroke="#555" stroke-width="3" fill="none"/></svg></button>
  <button type="button" class="sect">刀轨设置<svg class="chev" viewBox="0 0 16 18"><path d="M2 15l6-11 6 11" stroke="#555" stroke-width="3" fill="none"/></svg></button>
  <div class="op-rows pb-2" style="padding-top:9px">
   <div class="prow head-row"><label for="meth">方法</label><select id="meth" class="nx-select" style="width:109px"><option>METHOD</option></select><button type="button" class="sq" aria-label="新建方法"><svg><use href="#waves"/></svg></button><button type="button" class="sq" disabled aria-label="编辑方法"><svg><use href="#gwrench"/></svg></button></div>
   <div class="prow row30"><label for="s1">切削区域空间范围</label><select id="s1" class="nx-select han"><option>底面</option></select></div>
   <div class="prow row33"><label for="s2">切削模式</label><span class="position-relative d-flex"><select id="s2" class="nx-select han tall"><option>单向</option></select><svg class="position-absolute" style="left:6px;top:6px" width="22" height="20"><path d="M0 3h20M0 10h20M0 17h20M15 0l6 3-6 3zM15 7l6 3-6 3zM15 14l6 3-6 3z" stroke="#1c1cc0" fill="#1c1cc0"/></svg></span></div>
   <div class="prow row30"><label for="s3">步距</label><select id="s3" class="nx-select han"><option>刀具平直百分比</option></select></div>
   <div class="prow row26"><label for="n1">平面直径百分比</label><input id="n1" class="nx-input wide-num" value="75.00000"></div>
   <div class="prow row26"><label for="n2">底面毛坯厚度</label><input id="n2" class="nx-input" value="3.00000"></div>
   <div class="prow row26"><label for="n3">每刀切削深度</label><input id="n3" class="nx-input" value="0.00000"></div>
   <div class="prow row26"><label for="n4">Z 向深度偏置</label><input id="n4" class="nx-input" value="0.00000"></div>
   <div class="prow"><span>切削参数</span><button type="button" class="sq" aria-label="切削参数"><svg><use href="#cp"/></svg></button></div>
   <div class="prow"><span>非切削移动</span><button type="button" class="sq" aria-label="非切削移动"><svg><use href="#ncm"/></svg></button></div>
   <div class="prow"><span>进给率和速度</span><button type="button" class="sq" aria-label="进给率和速度"><svg><use href="#feed"/></svg></button></div>
  </div>
  <button type="button" class="sect">机床控制<svg class="chev" viewBox="0 0 16 18"><path d="M2 4l6 11 6-11" stroke="#555" stroke-width="3" fill="none"/></svg></button>
  <button type="button" class="sect">程序<svg class="chev" viewBox="0 0 16 18"><path d="M2 4l6 11 6-11" stroke="#555" stroke-width="3" fill="none"/></svg></button>
  <div class="sect"></div>
 </form>
 <div class="vrail"><i></i></div>
</aside>
<div class="banner-txt">星航UG网耀白老师</div>
</body>
</html>
